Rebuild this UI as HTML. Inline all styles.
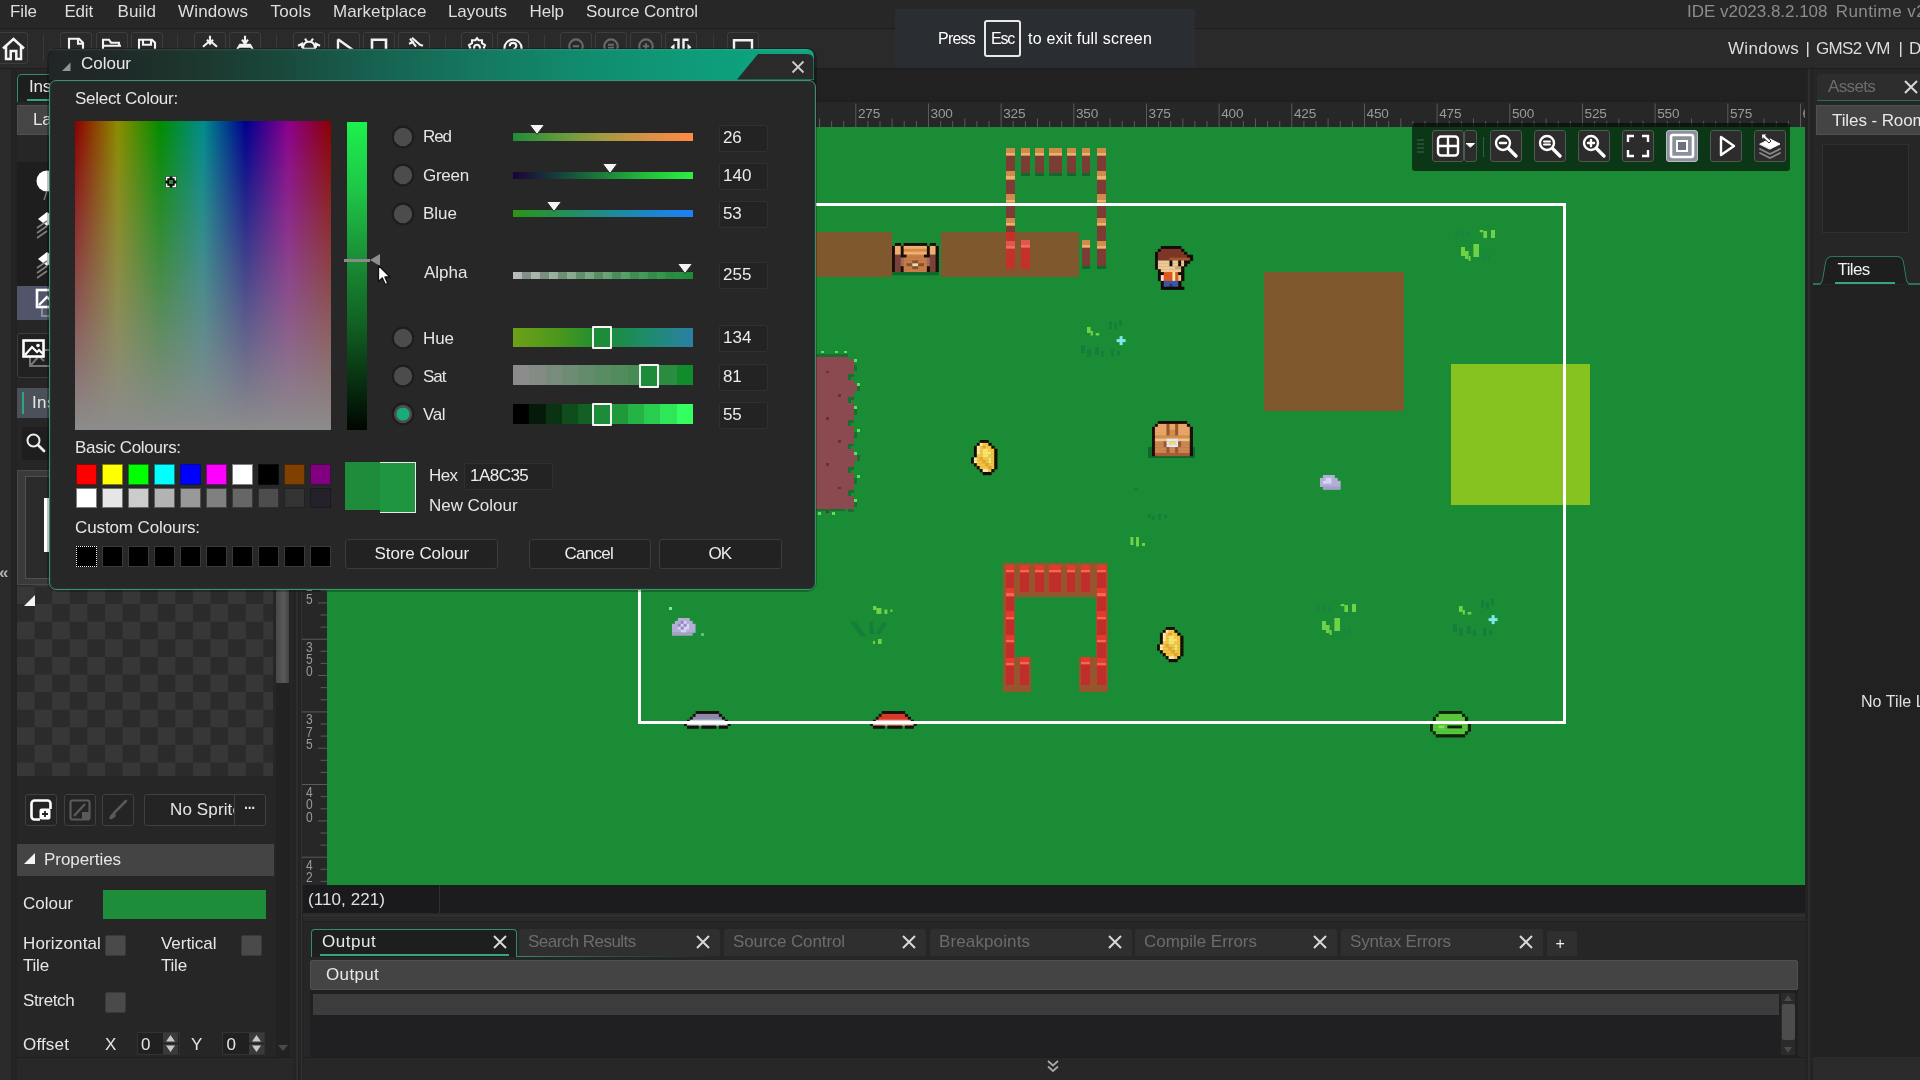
<!DOCTYPE html>
<html lang="en"><head><meta charset="utf-8"><title>Colour</title>
<style>
html,body{margin:0;padding:0;background:#262626;}
body{width:1920px;height:1080px;overflow:hidden;position:relative;font-family:"Liberation Sans",sans-serif;}
#root{position:absolute;left:0;top:0;width:1920px;height:1080px;overflow:hidden;background:#262626;will-change:transform;}
#root div,#root svg,#root span.t{position:absolute;box-sizing:border-box;}
span.t{white-space:pre;line-height:1;}
svg{overflow:visible;display:block;}
.clip{overflow:hidden;}
</style></head>
<body><div id="root">
<div style="left:0px;top:0px;width:1920px;height:28px;background:#272727;"></div>
<div style="left:0px;top:28px;width:1920px;height:1px;background:#1c1c1c;"></div>
<div style="left:0px;top:29px;width:1920px;height:39px;background:#2a2a2a;"></div>
<div style="left:0px;top:68px;width:1920px;height:1px;background:#1d1d1d;"></div>
<div style="left:0px;top:69px;width:1920px;height:1011px;background:#242424;"></div>
<span id="t1" class="t" style="left:10px;top:2.6px;font-size:17px;color:#dedede;letter-spacing:-0.12px;">File</span>
<span id="t2" class="t" style="left:64.5px;top:2.6px;font-size:17px;color:#dedede;letter-spacing:-0.23px;">Edit</span>
<span id="t3" class="t" style="left:117.5px;top:2.6px;font-size:17px;color:#dedede;letter-spacing:0.15px;">Build</span>
<span id="t4" class="t" style="left:178px;top:2.6px;font-size:17px;color:#dedede;letter-spacing:0.16px;">Windows</span>
<span id="t5" class="t" style="left:270.5px;top:2.6px;font-size:17px;color:#dedede;letter-spacing:0.18px;">Tools</span>
<span id="t6" class="t" style="left:333px;top:2.6px;font-size:17px;color:#dedede;letter-spacing:0.08px;">Marketplace</span>
<span id="t7" class="t" style="left:448px;top:2.6px;font-size:17px;color:#dedede;letter-spacing:-0.08px;">Layouts</span>
<span id="t8" class="t" style="left:529.5px;top:2.6px;font-size:17px;color:#dedede;letter-spacing:-0.13px;">Help</span>
<span id="t9" class="t" style="left:586px;top:2.6px;font-size:17px;color:#dedede;letter-spacing:-0.10px;">Source Control</span>
<span id="t10" class="t" style="left:1687px;top:2.6px;font-size:17px;color:#8c8c8c;letter-spacing:-0.02px;">IDE v2023.8.2.108</span>
<span id="t11" class="t" style="left:1835.7px;top:2.6px;font-size:17px;color:#8c8c8c;letter-spacing:0.44px;">Runtime v2023.8.2</span>
<span id="t12" class="t" style="left:1728px;top:39.6px;font-size:17px;color:#dcdcdc;letter-spacing:0.31px;">Windows</span>
<span id="t13" class="t" style="left:1805.5px;top:39.6px;font-size:17px;color:#dcdcdc;">|</span>
<span id="t14" class="t" style="left:1816px;top:39.6px;font-size:17px;color:#dcdcdc;letter-spacing:-0.68px;">GMS2 VM</span>
<span id="t15" class="t" style="left:1898.5px;top:39.6px;font-size:17px;color:#dcdcdc;">|</span>
<span id="t16" class="t" style="left:1909px;top:39.6px;font-size:17px;color:#dcdcdc;letter-spacing:0.94px;">Default</span>
<div style="left:-3px;top:32px;width:31px;height:32px;background:#2a2a2a;border:1px solid #3d3d3d;border-radius:3px;"></div>
<svg style="left:0px;top:32px;" width="28" height="32" viewBox="0 0 28 32"><path d="M3 16.5 L13.5 7 L24 16.5 M6 14 V27 H10.7 V19 H16.3 V27 H21 V14" fill="none" stroke="#f4f4f4" stroke-width="2.5" stroke-linejoin="miter"/></svg>
<div style="left:43px;top:35px;width:1px;height:26px;background:#3a3a3a;"></div>
<div style="left:60px;top:32px;width:32px;height:32px;background:#2a2a2a;border:1px solid #3d3d3d;border-radius:3px;"></div>
<svg style="left:60px;top:32px;" width="32" height="32" viewBox="0 0 32 32"><g fill="none" stroke="#f2f2f2" stroke-width="2.1" transform="translate(0,-2.3)"><path d="M9 24 V9 H19 L23 13 V24 M18 9 V14 H23"/></g></svg>
<div style="left:96px;top:32px;width:32px;height:32px;background:#2a2a2a;border:1px solid #3d3d3d;border-radius:3px;"></div>
<svg style="left:96px;top:32px;" width="32" height="32" viewBox="0 0 32 32"><g fill="none" stroke="#f2f2f2" stroke-width="2.1" transform="translate(0,-2.3)"><path d="M7 24 V10 H13 L15 13 H23 V16 M7 16 H25"/></g></svg>
<div style="left:131px;top:32px;width:32px;height:32px;background:#2a2a2a;border:1px solid #3d3d3d;border-radius:3px;"></div>
<svg style="left:131px;top:32px;" width="32" height="32" viewBox="0 0 32 32"><g fill="none" stroke="#f2f2f2" stroke-width="2.1" transform="translate(0,-2.3)"><path d="M8 24 V10 H21 L24 13 V24 M12 10 V15 H20 V10"/></g></svg>
<div style="left:177px;top:35px;width:1px;height:26px;background:#3a3a3a;"></div>
<div style="left:194px;top:32px;width:32px;height:32px;background:#2a2a2a;border:1px solid #3d3d3d;border-radius:3px;"></div>
<svg style="left:194px;top:32px;" width="32" height="32" viewBox="0 0 32 32"><g fill="none" stroke="#f2f2f2" stroke-width="2.1" transform="translate(0,-2.3)"><path d="M16 6 V13 M13 10 L16 14 L19 10 M9 17 L16 11 M23 17 L16 11" /></g></svg>
<div style="left:229px;top:32px;width:32px;height:32px;background:#2a2a2a;border:1px solid #3d3d3d;border-radius:3px;"></div>
<svg style="left:229px;top:32px;" width="32" height="32" viewBox="0 0 32 32"><g fill="none" stroke="#f2f2f2" stroke-width="2.1" transform="translate(0,-2.3)"><path d="M16 6 V13 M13 10 L16 14 L19 10 M10 17 H22 M8 20 L11 15 H21 L24 20"/></g></svg>
<div style="left:276px;top:35px;width:1px;height:26px;background:#3a3a3a;"></div>
<div style="left:293px;top:32px;width:32px;height:32px;background:#2a2a2a;border:1px solid #3d3d3d;border-radius:3px;"></div>
<svg style="left:293px;top:32px;" width="32" height="32" viewBox="0 0 32 32"><g fill="none" stroke="#f2f2f2" stroke-width="2.1" transform="translate(0,-2.3)"><path d="M10 19 Q10 12 16 12 Q22 12 22 19 Z M12 9 L14 12 M20 9 L18 12 M5 16 L9 14 L9 18 M27 16 L23 14 L23 18" /></g></svg>
<div style="left:328px;top:32px;width:32px;height:32px;background:#2a2a2a;border:1px solid #3d3d3d;border-radius:3px;"></div>
<svg style="left:328px;top:32px;" width="32" height="32" viewBox="0 0 32 32"><g fill="none" stroke="#f2f2f2" stroke-width="2.1" transform="translate(0,-2.3)"><path d="M10 9.5 L26 21 M10 9.5 V26" stroke-width="2.4"/></g></svg>
<div style="left:363px;top:32px;width:32px;height:32px;background:#2a2a2a;border:1px solid #3d3d3d;border-radius:3px;"></div>
<svg style="left:363px;top:32px;" width="32" height="32" viewBox="0 0 32 32"><g fill="none" stroke="#f2f2f2" stroke-width="2.1" transform="translate(0,-2.3)"><path d="M9 26 V10 H23 V26" stroke-width="2.6"/></g></svg>
<div style="left:398px;top:32px;width:32px;height:32px;background:#2a2a2a;border:1px solid #3d3d3d;border-radius:3px;"></div>
<svg style="left:398px;top:32px;" width="32" height="32" viewBox="0 0 32 32"><g fill="none" stroke="#f2f2f2" stroke-width="2.1" transform="translate(0,-2.3)"><path d="M12 9 L18 17 M14 8 L22 15 L25 16 M11 14 L16 12"/></g></svg>
<div style="left:445px;top:35px;width:1px;height:26px;background:#3a3a3a;"></div>
<div style="left:461px;top:32px;width:32px;height:32px;background:#2a2a2a;border:1px solid #3d3d3d;border-radius:3px;"></div>
<svg style="left:461px;top:32px;" width="32" height="32" viewBox="0 0 32 32"><g fill="none" stroke="#f2f2f2" stroke-width="2.1" transform="translate(0,-2.3)"><path d="M9.5 19 L8 15.5 L11 13.5 L11 10.5 L14.5 10.5 L16 8.5 L17.5 10.5 L21 10.5 L21 13.5 L24 15.5 L22.5 19"/><path d="M13 19 Q13 15 16 15 Q19 15 19 19"/></g></svg>
<div style="left:497px;top:32px;width:32px;height:32px;background:#2a2a2a;border:1px solid #3d3d3d;border-radius:3px;"></div>
<svg style="left:497px;top:32px;" width="32" height="32" viewBox="0 0 32 32"><g fill="none" stroke="#f2f2f2" stroke-width="2.1" transform="translate(0,-2.3)"><circle cx="16" cy="18.5" r="8.6"/><path d="M12.7 16.5 Q12.7 13.2 16 13.2 Q19.3 13.2 19.3 16.2 Q19.3 18 16.5 19.5"/></g></svg>
<div style="left:544px;top:35px;width:1px;height:26px;background:#3a3a3a;"></div>
<div style="left:560px;top:32px;width:32px;height:32px;background:#2a2a2a;border:1px solid #3d3d3d;border-radius:3px;"></div>
<svg style="left:560px;top:32px;" width="32" height="32" viewBox="0 0 32 32"><g fill="none" stroke="#6a6a6a" stroke-width="2.1" transform="translate(0,-2.3)"><circle cx="16" cy="16.5" r="6.8"/><path d="M13 16.5 H19"/></g></svg>
<div style="left:595px;top:32px;width:32px;height:32px;background:#2a2a2a;border:1px solid #3d3d3d;border-radius:3px;"></div>
<svg style="left:595px;top:32px;" width="32" height="32" viewBox="0 0 32 32"><g fill="none" stroke="#6a6a6a" stroke-width="2.1" transform="translate(0,-2.3)"><circle cx="16" cy="16.5" r="6.8"/><path d="M13 15 H19 M13 18 H19"/></g></svg>
<div style="left:630px;top:32px;width:32px;height:32px;background:#2a2a2a;border:1px solid #3d3d3d;border-radius:3px;"></div>
<svg style="left:630px;top:32px;" width="32" height="32" viewBox="0 0 32 32"><g fill="none" stroke="#6a6a6a" stroke-width="2.1" transform="translate(0,-2.3)"><circle cx="16" cy="16.5" r="6.8"/><path d="M13 16.5 H19 M16 13.5 V19.5"/></g></svg>
<div style="left:665px;top:32px;width:32px;height:32px;background:#2a2a2a;border:1px solid #3d3d3d;border-radius:3px;"></div>
<svg style="left:665px;top:32px;" width="32" height="32" viewBox="0 0 32 32"><g fill="none" stroke="#f2f2f2" stroke-width="2.1" transform="translate(0,-2.3)"><path d="M13.5 26 V10 H8.5 M18.5 26 V10 H23.5" stroke-width="2.4"/><path d="M9.5 14 V21 L5.5 17.5 Z M22.5 14 V21 L26.5 17.5 Z" fill="#f2f2f2" stroke="none"/></g></svg>
<div style="left:713px;top:35px;width:1px;height:26px;background:#3a3a3a;"></div>
<div style="left:727px;top:32px;width:32px;height:32px;background:#2a2a2a;border:1px solid #3d3d3d;border-radius:3px;"></div>
<svg style="left:727px;top:32px;" width="32" height="32" viewBox="0 0 32 32"><g fill="none" stroke="#f2f2f2" stroke-width="2.1" transform="translate(0,-2.3)"><path d="M7 26 V10.5 H25 V26" stroke-width="2.4"/></g></svg>
<div style="left:895px;top:9px;width:300px;height:59px;background:#2a2d31;border-radius:2px;"></div>
<span id="t17" class="t" style="left:938px;top:30.5px;font-size:16px;color:#ffffff;letter-spacing:-0.76px;">Press</span>
<div style="left:984px;top:20px;width:37px;height:37px;border:2px solid #e8e8e8;border-radius:3px;"></div>
<span id="t18" class="t" style="left:991px;top:30.5px;font-size:16px;color:#ffffff;letter-spacing:-1.27px;">Esc</span>
<span id="t19" class="t" style="left:1028px;top:30.5px;font-size:16px;color:#ffffff;letter-spacing:0.21px;">to exit full screen</span>
<div style="left:0px;top:69px;width:17px;height:1011px;background:#2a2a2a;"></div>
<div style="left:10.5px;top:69px;width:6.5px;height:1011px;background:#232323;"></div>
<div style="left:17px;top:69px;width:276px;height:988px;background:#262626;"></div>
<div style="left:293px;top:69px;width:12px;height:1011px;background:#242424;"></div>
<div style="left:296px;top:69px;width:2px;height:1011px;background:#2d2d2d;"></div>
<div style="left:301px;top:69px;width:1px;height:1011px;background:#323232;"></div>
<div style="left:17px;top:74px;width:40px;height:28px;background:#1e1e1e;border:1.5px solid #2f8f6a;border-bottom:none;border-radius:5px 5px 0 0;"></div>
<div style="left:27px;top:99px;width:30px;height:2px;background:#35a77a;"></div>
<span id="t20" class="t" style="left:29px;top:77.6px;font-size:17px;color:#e6e6e6;letter-spacing:-0.23px;">Inspector</span>
<div style="left:17px;top:105px;width:260px;height:30px;background:#454545;border:1px solid #505050;"></div>
<span id="t21" class="t" style="left:33px;top:111.1px;font-size:17px;color:#e6e6e6;letter-spacing:-0.19px;">Layers</span>
<div style="left:17px;top:162px;width:260px;height:158px;background:#1e1e1e;"></div>
<svg style="left:17px;top:162px;" width="40" height="160" viewBox="0 0 40 160"><circle cx="30" cy="19" r="10.5" fill="#fff"/><path d="M30 29 L27 38" stroke="#777" stroke-width="1.5"/><path d="M21 57 L30 50 L39 57 L30 64 Z" fill="#fff"/><path d="M20 66 L30 59 M20 71 L30 64 M20 76 L30 69" stroke="#808080" stroke-width="1.6" fill="none"/><path d="M21 97 L30 90 L39 97 L30 104 Z" fill="#fff"/><path d="M20 106 L30 99 M20 111 L30 104 M20 116 L30 109" stroke="#808080" stroke-width="1.6" fill="none"/></svg>
<div style="left:17px;top:286px;width:260px;height:34px;background:#50556a;"></div>
<svg style="left:17px;top:286px;" width="40" height="34" viewBox="0 0 40 34"><rect x="25" y="14" width="20" height="16" fill="none" stroke="#8a8f9a" stroke-width="2"/><rect x="20" y="4" width="22" height="17" fill="#50556a" stroke="#fff" stroke-width="2.6"/><path d="M22 19 L30 11 L38 19" fill="none" stroke="#fff" stroke-width="2.4"/></svg>
<div style="left:17px;top:333px;width:44px;height:45px;background:#212121;border:1px solid #3c3c3c;border-radius:3px;"></div>
<svg style="left:17px;top:333px;" width="44" height="45" viewBox="0 0 44 45"><rect x="13" y="17" width="20" height="16" fill="none" stroke="#777" stroke-width="2"/><path d="M14 32 L22 23 L27 28" fill="none" stroke="#777" stroke-width="2"/><rect x="6.5" y="7.5" width="20" height="16" fill="#212121" stroke="#fff" stroke-width="2.6"/><path d="M8 22 L15 14 L20 19 L22 17 L26 21" fill="none" stroke="#fff" stroke-width="2.2"/><circle cx="21" cy="12.5" r="1.8" fill="#fff"/></svg>
<div style="left:17px;top:388px;width:260px;height:30px;background:#4a5159;"></div>
<div style="left:22px;top:392px;width:2px;height:22px;background:#2fa57c;"></div>
<span id="t22" class="t" style="left:32px;top:394.1px;font-size:17px;color:#e6e6e6;letter-spacing:0.38px;">Instance Layer Properties</span>
<div style="left:22px;top:427px;width:40px;height:33px;background:#1e1e1e;"></div>
<svg style="left:22px;top:427px;" width="40" height="33" viewBox="0 0 40 33"><circle cx="11.5" cy="13.5" r="6" fill="none" stroke="#eee" stroke-width="2"/><path d="M16 18 L22 24" stroke="#eee" stroke-width="2.8" stroke-linecap="round"/></svg>
<div style="left:17px;top:470px;width:260px;height:115px;background:#3a3a3a;border:1px solid #4a4a4a;"></div>
<div style="left:25px;top:476px;width:244px;height:103px;background:#2a2a2a;border:1px solid #505050;"></div>
<div style="left:44px;top:498px;width:10px;height:54px;background:#ffffff;"></div>
<span id="t23" class="t" style="left:-1px;top:563.6px;font-size:17px;color:#b4b4b4;font-weight:bold;">«</span>
<div style="left:17px;top:585px;width:256px;height:191px;background:#2b2b2b;background-image:conic-gradient(#2b2b2b 25%,#373737 0 50%,#2b2b2b 0 75%,#373737 0);background-size:35.2px 35.2px;background-position:0px 1.5px;"></div>
<svg style="left:24px;top:595px;" width="12" height="12" viewBox="0 0 12 12"><path d="M0 11 L11 11 L11 0 Z" fill="#f4f4f4"/></svg>
<div style="left:276px;top:585px;width:14px;height:472px;background:#222222;"></div>
<div style="left:276px;top:585px;width:13px;height:98px;background:linear-gradient(90deg,#474747,#5a5a5a 60%,#444);"></div>
<svg style="left:276px;top:1043px;" width="14" height="10" viewBox="0 0 14 10"><path d="M2 2 L12 2 L7 8 Z" fill="#4a4a4a"/></svg>
<div style="left:25px;top:794px;width:32px;height:32px;background:#242424;border:1px solid #404040;border-radius:3px;"></div>
<svg style="left:25px;top:794px;" width="32" height="32" viewBox="0 0 32 32"><rect x="6.5" y="6.5" width="19" height="19" rx="3" fill="none" stroke="#fff" stroke-width="2.6"/><rect x="15" y="15" width="12" height="12" fill="#242424"/><rect x="14.5" y="14.5" width="11" height="11" rx="2" fill="#fff"/><path d="M17 20 H23 M20 17 V23" stroke="#242424" stroke-width="1.8"/></svg>
<div style="left:63.5px;top:794px;width:32px;height:32px;background:#242424;border:1px solid #404040;border-radius:3px;"></div>
<svg style="left:63.5px;top:794px;" width="32" height="32" viewBox="0 0 32 32"><rect x="6.5" y="6.5" width="19" height="19" rx="2" fill="none" stroke="#5a5a5a" stroke-width="2.2"/><path d="M10 22 L21 10" stroke="#5a5a5a" stroke-width="2.4"/><rect x="18" y="18" width="7" height="7" fill="#5a5a5a"/></svg>
<div style="left:102px;top:794px;width:32px;height:32px;background:#242424;border:1px solid #404040;border-radius:3px;"></div>
<svg style="left:102px;top:794px;" width="32" height="32" viewBox="0 0 32 32"><path d="M9 24 L12 19 L24 7" stroke="#5a5a5a" stroke-width="2.6" fill="none" stroke-linecap="round"/><path d="M7 25 Q8 20 12 19 L14 21 Q13 25 7 25Z" fill="#5a5a5a"/></svg>
<div style="left:143.5px;top:794px;width:122px;height:32px;background:#242424;border:1px solid #404040;border-radius:3px;"></div>
<div style="left:233.5px;top:795px;width:1px;height:30px;background:#404040;"></div>
<div style="left:144.5px;top:795px;width:89px;height:30px;overflow:hidden;"><span id="t24" class="t" style="left:25.5px;top:6.1px;font-size:17px;color:#e6e6e6;letter-spacing:0.13px;">No Sprite</span></div>
<span id="t25" class="t" style="left:244px;top:801.1px;font-size:14px;color:#e6e6e6;letter-spacing:-1.00px;font-weight:bold;">···</span>
<div style="left:17px;top:844px;width:257px;height:32px;background:#444444;"></div>
<svg style="left:24px;top:853px;" width="12" height="12" viewBox="0 0 12 12"><path d="M0 11 L11 11 L11 0 Z" fill="#f4f4f4"/></svg>
<span id="t26" class="t" style="left:44px;top:850.6px;font-size:17px;color:#e6e6e6;letter-spacing:-0.05px;">Properties</span>
<span id="t27" class="t" style="left:23px;top:894.6px;font-size:17px;color:#e6e6e6;letter-spacing:-0.02px;">Colour</span>
<div style="left:103px;top:889.5px;width:163px;height:29px;background:#1d8d39;"></div>
<span id="t28" class="t" style="left:23px;top:935.1px;font-size:17px;color:#e6e6e6;letter-spacing:0.15px;">Horizontal</span>
<span id="t29" class="t" style="left:23px;top:956.6px;font-size:17px;color:#e6e6e6;letter-spacing:-0.22px;">Tile</span>
<div style="left:105px;top:935px;width:21px;height:21px;background:#4a4a4a;border:1px solid #3a3a3a;border-radius:2px;"></div>
<span id="t30" class="t" style="left:161px;top:935.1px;font-size:17px;color:#e6e6e6;letter-spacing:-0.03px;">Vertical</span>
<span id="t31" class="t" style="left:161px;top:956.6px;font-size:17px;color:#e6e6e6;letter-spacing:-0.22px;">Tile</span>
<div style="left:241px;top:935px;width:21px;height:21px;background:#4a4a4a;border:1px solid #3a3a3a;border-radius:2px;"></div>
<span id="t32" class="t" style="left:23px;top:992.1px;font-size:17px;color:#e6e6e6;letter-spacing:-0.36px;">Stretch</span>
<div style="left:105px;top:992px;width:21px;height:21px;background:#4a4a4a;border:1px solid #3a3a3a;border-radius:2px;"></div>
<span id="t33" class="t" style="left:23px;top:1035.6px;font-size:17px;color:#e6e6e6;letter-spacing:0.17px;">Offset</span>
<span id="t34" class="t" style="left:105px;top:1035.6px;font-size:17px;color:#e6e6e6;letter-spacing:-1.34px;">X</span>
<div style="left:136.5px;top:1031.5px;width:43px;height:23px;background:#202020;border:1px solid #333;"></div>
<span id="t35" class="t" style="left:141.0px;top:1035.6px;font-size:17px;color:#e6e6e6;letter-spacing:-0.47px;">0</span>
<div style="left:163.0px;top:1032.5px;width:15px;height:21px;background:#3a3a3a;"></div>
<svg style="left:163.0px;top:1032.5px;" width="15" height="21" viewBox="0 0 15 21"><path d="M3 8.5 L12 8.5 L7.5 2 Z M3 12.5 L12 12.5 L7.5 19 Z" fill="#c8c8c8"/><path d="M0 10.5 H15" stroke="#222" stroke-width="1.5"/></svg>
<span id="t36" class="t" style="left:191px;top:1035.6px;font-size:17px;color:#e6e6e6;letter-spacing:-1.84px;">Y</span>
<div style="left:222px;top:1031.5px;width:43px;height:23px;background:#202020;border:1px solid #333;"></div>
<span id="t37" class="t" style="left:226.5px;top:1035.6px;font-size:17px;color:#e6e6e6;letter-spacing:-0.47px;">0</span>
<div style="left:248.5px;top:1032.5px;width:15px;height:21px;background:#3a3a3a;"></div>
<svg style="left:248.5px;top:1032.5px;" width="15" height="21" viewBox="0 0 15 21"><path d="M3 8.5 L12 8.5 L7.5 2 Z M3 12.5 L12 12.5 L7.5 19 Z" fill="#c8c8c8"/><path d="M0 10.5 H15" stroke="#222" stroke-width="1.5"/></svg>
<div style="left:17px;top:1057px;width:276px;height:1px;background:#1e1e1e;"></div>
<div style="left:17px;top:1058px;width:276px;height:22px;background:#282828;"></div>
<div style="left:303px;top:69px;width:1502px;height:31px;background:#212121;"></div>
<div style="left:303px;top:100px;width:1502px;height:27px;background:#272727;"></div>
<div style="left:302px;top:100px;width:25px;height:785px;background:#272727;"></div>
<div style="left:327px;top:127px;width:1478px;height:758px;background:#1a8c35;"></div>
<svg style="left:305px;top:100px;" width="1500" height="27" viewBox="0 0 1500 27"><rect x="29.5" y="21" width="1" height="6" fill="#5a5a5a"/><rect x="41.6" y="3.5" width="1" height="23.5" fill="#5a5a5a"/><rect x="53.7" y="21" width="1" height="6" fill="#5a5a5a"/><rect x="65.8" y="21" width="1" height="6" fill="#5a5a5a"/><rect x="78.0" y="18.5" width="1" height="8.5" fill="#5a5a5a"/><rect x="90.1" y="21" width="1" height="6" fill="#5a5a5a"/><rect x="102.2" y="21" width="1" height="6" fill="#5a5a5a"/><rect x="114.3" y="3.5" width="1" height="23.5" fill="#5a5a5a"/><rect x="126.4" y="21" width="1" height="6" fill="#5a5a5a"/><rect x="138.5" y="21" width="1" height="6" fill="#5a5a5a"/><rect x="150.6" y="18.5" width="1" height="8.5" fill="#5a5a5a"/><rect x="162.7" y="21" width="1" height="6" fill="#5a5a5a"/><rect x="174.9" y="21" width="1" height="6" fill="#5a5a5a"/><rect x="187.0" y="3.5" width="1" height="23.5" fill="#5a5a5a"/><rect x="199.1" y="21" width="1" height="6" fill="#5a5a5a"/><rect x="211.2" y="21" width="1" height="6" fill="#5a5a5a"/><rect x="223.3" y="18.5" width="1" height="8.5" fill="#5a5a5a"/><rect x="235.4" y="21" width="1" height="6" fill="#5a5a5a"/><rect x="247.5" y="21" width="1" height="6" fill="#5a5a5a"/><rect x="259.6" y="3.5" width="1" height="23.5" fill="#5a5a5a"/><rect x="271.7" y="21" width="1" height="6" fill="#5a5a5a"/><rect x="283.9" y="21" width="1" height="6" fill="#5a5a5a"/><rect x="296.0" y="18.5" width="1" height="8.5" fill="#5a5a5a"/><rect x="308.1" y="21" width="1" height="6" fill="#5a5a5a"/><rect x="320.2" y="21" width="1" height="6" fill="#5a5a5a"/><rect x="332.3" y="3.5" width="1" height="23.5" fill="#5a5a5a"/><rect x="344.4" y="21" width="1" height="6" fill="#5a5a5a"/><rect x="356.5" y="21" width="1" height="6" fill="#5a5a5a"/><rect x="368.6" y="18.5" width="1" height="8.5" fill="#5a5a5a"/><rect x="380.7" y="21" width="1" height="6" fill="#5a5a5a"/><rect x="392.9" y="21" width="1" height="6" fill="#5a5a5a"/><rect x="405.0" y="3.5" width="1" height="23.5" fill="#5a5a5a"/><rect x="417.1" y="21" width="1" height="6" fill="#5a5a5a"/><rect x="429.2" y="21" width="1" height="6" fill="#5a5a5a"/><rect x="441.3" y="18.5" width="1" height="8.5" fill="#5a5a5a"/><rect x="453.4" y="21" width="1" height="6" fill="#5a5a5a"/><rect x="465.5" y="21" width="1" height="6" fill="#5a5a5a"/><rect x="477.6" y="3.5" width="1" height="23.5" fill="#5a5a5a"/><rect x="489.7" y="21" width="1" height="6" fill="#5a5a5a"/><rect x="501.9" y="21" width="1" height="6" fill="#5a5a5a"/><rect x="514.0" y="18.5" width="1" height="8.5" fill="#5a5a5a"/><rect x="526.1" y="21" width="1" height="6" fill="#5a5a5a"/><rect x="538.2" y="21" width="1" height="6" fill="#5a5a5a"/><rect x="550.3" y="3.5" width="1" height="23.5" fill="#5a5a5a"/><rect x="562.4" y="21" width="1" height="6" fill="#5a5a5a"/><rect x="574.5" y="21" width="1" height="6" fill="#5a5a5a"/><rect x="586.6" y="18.5" width="1" height="8.5" fill="#5a5a5a"/><rect x="598.7" y="21" width="1" height="6" fill="#5a5a5a"/><rect x="610.9" y="21" width="1" height="6" fill="#5a5a5a"/><rect x="623.0" y="3.5" width="1" height="23.5" fill="#5a5a5a"/><rect x="635.1" y="21" width="1" height="6" fill="#5a5a5a"/><rect x="647.2" y="21" width="1" height="6" fill="#5a5a5a"/><rect x="659.3" y="18.5" width="1" height="8.5" fill="#5a5a5a"/><rect x="671.4" y="21" width="1" height="6" fill="#5a5a5a"/><rect x="683.5" y="21" width="1" height="6" fill="#5a5a5a"/><rect x="695.6" y="3.5" width="1" height="23.5" fill="#5a5a5a"/><rect x="707.7" y="21" width="1" height="6" fill="#5a5a5a"/><rect x="719.9" y="21" width="1" height="6" fill="#5a5a5a"/><rect x="732.0" y="18.5" width="1" height="8.5" fill="#5a5a5a"/><rect x="744.1" y="21" width="1" height="6" fill="#5a5a5a"/><rect x="756.2" y="21" width="1" height="6" fill="#5a5a5a"/><rect x="768.3" y="3.5" width="1" height="23.5" fill="#5a5a5a"/><rect x="780.4" y="21" width="1" height="6" fill="#5a5a5a"/><rect x="792.5" y="21" width="1" height="6" fill="#5a5a5a"/><rect x="804.6" y="18.5" width="1" height="8.5" fill="#5a5a5a"/><rect x="816.7" y="21" width="1" height="6" fill="#5a5a5a"/><rect x="828.9" y="21" width="1" height="6" fill="#5a5a5a"/><rect x="841.0" y="3.5" width="1" height="23.5" fill="#5a5a5a"/><rect x="853.1" y="21" width="1" height="6" fill="#5a5a5a"/><rect x="865.2" y="21" width="1" height="6" fill="#5a5a5a"/><rect x="877.3" y="18.5" width="1" height="8.5" fill="#5a5a5a"/><rect x="889.4" y="21" width="1" height="6" fill="#5a5a5a"/><rect x="901.5" y="21" width="1" height="6" fill="#5a5a5a"/><rect x="913.6" y="3.5" width="1" height="23.5" fill="#5a5a5a"/><rect x="925.7" y="21" width="1" height="6" fill="#5a5a5a"/><rect x="937.9" y="21" width="1" height="6" fill="#5a5a5a"/><rect x="950.0" y="18.5" width="1" height="8.5" fill="#5a5a5a"/><rect x="962.1" y="21" width="1" height="6" fill="#5a5a5a"/><rect x="974.2" y="21" width="1" height="6" fill="#5a5a5a"/><rect x="986.3" y="3.5" width="1" height="23.5" fill="#5a5a5a"/><rect x="998.4" y="21" width="1" height="6" fill="#5a5a5a"/><rect x="1010.5" y="21" width="1" height="6" fill="#5a5a5a"/><rect x="1022.6" y="18.5" width="1" height="8.5" fill="#5a5a5a"/><rect x="1034.8" y="21" width="1" height="6" fill="#5a5a5a"/><rect x="1046.9" y="21" width="1" height="6" fill="#5a5a5a"/><rect x="1059.0" y="3.5" width="1" height="23.5" fill="#5a5a5a"/><rect x="1071.1" y="21" width="1" height="6" fill="#5a5a5a"/><rect x="1083.2" y="21" width="1" height="6" fill="#5a5a5a"/><rect x="1095.3" y="18.5" width="1" height="8.5" fill="#5a5a5a"/><rect x="1107.4" y="21" width="1" height="6" fill="#5a5a5a"/><rect x="1119.5" y="21" width="1" height="6" fill="#5a5a5a"/><rect x="1131.6" y="3.5" width="1" height="23.5" fill="#5a5a5a"/><rect x="1143.8" y="21" width="1" height="6" fill="#5a5a5a"/><rect x="1155.9" y="21" width="1" height="6" fill="#5a5a5a"/><rect x="1168.0" y="18.5" width="1" height="8.5" fill="#5a5a5a"/><rect x="1180.1" y="21" width="1" height="6" fill="#5a5a5a"/><rect x="1192.2" y="21" width="1" height="6" fill="#5a5a5a"/><rect x="1204.3" y="3.5" width="1" height="23.5" fill="#5a5a5a"/><rect x="1216.4" y="21" width="1" height="6" fill="#5a5a5a"/><rect x="1228.5" y="21" width="1" height="6" fill="#5a5a5a"/><rect x="1240.6" y="18.5" width="1" height="8.5" fill="#5a5a5a"/><rect x="1252.8" y="21" width="1" height="6" fill="#5a5a5a"/><rect x="1264.9" y="21" width="1" height="6" fill="#5a5a5a"/><rect x="1277.0" y="3.5" width="1" height="23.5" fill="#5a5a5a"/><rect x="1289.1" y="21" width="1" height="6" fill="#5a5a5a"/><rect x="1301.2" y="21" width="1" height="6" fill="#5a5a5a"/><rect x="1313.3" y="18.5" width="1" height="8.5" fill="#5a5a5a"/><rect x="1325.4" y="21" width="1" height="6" fill="#5a5a5a"/><rect x="1337.5" y="21" width="1" height="6" fill="#5a5a5a"/><rect x="1349.6" y="3.5" width="1" height="23.5" fill="#5a5a5a"/><rect x="1361.8" y="21" width="1" height="6" fill="#5a5a5a"/><rect x="1373.9" y="21" width="1" height="6" fill="#5a5a5a"/><rect x="1386.0" y="18.5" width="1" height="8.5" fill="#5a5a5a"/><rect x="1398.1" y="21" width="1" height="6" fill="#5a5a5a"/><rect x="1410.2" y="21" width="1" height="6" fill="#5a5a5a"/><rect x="1422.3" y="3.5" width="1" height="23.5" fill="#5a5a5a"/><rect x="1434.4" y="21" width="1" height="6" fill="#5a5a5a"/><rect x="1446.5" y="21" width="1" height="6" fill="#5a5a5a"/><rect x="1458.6" y="18.5" width="1" height="8.5" fill="#5a5a5a"/><rect x="1470.8" y="21" width="1" height="6" fill="#5a5a5a"/><rect x="1482.9" y="21" width="1" height="6" fill="#5a5a5a"/><rect x="1495.0" y="3.5" width="1" height="23.5" fill="#5a5a5a"/></svg>
<div style="left:303px;top:100px;width:1502px;height:2px;background:#1f1f1f;"></div>
<span id="t38" class="t" style="left:857.9px;top:106.5px;font-size:13.6px;color:#9a9a9a;letter-spacing:-0.19px;overflow:hidden;max-width:947px;">275</span>
<span id="t39" class="t" style="left:930.5675px;top:106.5px;font-size:13.6px;color:#9a9a9a;letter-spacing:-0.19px;overflow:hidden;max-width:874px;">300</span>
<span id="t40" class="t" style="left:1003.235px;top:106.5px;font-size:13.6px;color:#9a9a9a;letter-spacing:-0.20px;overflow:hidden;max-width:801px;">325</span>
<span id="t41" class="t" style="left:1075.9025px;top:106.5px;font-size:13.6px;color:#9a9a9a;letter-spacing:-0.19px;overflow:hidden;max-width:729px;">350</span>
<span id="t42" class="t" style="left:1148.5699999999997px;top:106.5px;font-size:13.6px;color:#9a9a9a;letter-spacing:-0.19px;overflow:hidden;max-width:656px;">375</span>
<span id="t43" class="t" style="left:1221.2374999999997px;top:106.5px;font-size:13.6px;color:#9a9a9a;letter-spacing:-0.19px;overflow:hidden;max-width:583px;">400</span>
<span id="t44" class="t" style="left:1293.9049999999997px;top:106.5px;font-size:13.6px;color:#9a9a9a;letter-spacing:-0.19px;overflow:hidden;max-width:511px;">425</span>
<span id="t45" class="t" style="left:1366.5724999999998px;top:106.5px;font-size:13.6px;color:#9a9a9a;letter-spacing:-0.19px;overflow:hidden;max-width:438px;">450</span>
<span id="t46" class="t" style="left:1439.2399999999998px;top:106.5px;font-size:13.6px;color:#9a9a9a;letter-spacing:-0.19px;overflow:hidden;max-width:365px;">475</span>
<span id="t47" class="t" style="left:1511.9074999999998px;top:106.5px;font-size:13.6px;color:#9a9a9a;letter-spacing:-0.19px;overflow:hidden;max-width:293px;">500</span>
<span id="t48" class="t" style="left:1584.5749999999998px;top:106.5px;font-size:13.6px;color:#9a9a9a;letter-spacing:-0.19px;overflow:hidden;max-width:220px;">525</span>
<span id="t49" class="t" style="left:1657.2424999999998px;top:106.5px;font-size:13.6px;color:#9a9a9a;letter-spacing:-0.19px;overflow:hidden;max-width:147px;">550</span>
<span id="t50" class="t" style="left:1729.9099999999999px;top:106.5px;font-size:13.6px;color:#9a9a9a;letter-spacing:-0.19px;overflow:hidden;max-width:75px;">575</span>
<span id="t51" class="t" style="left:1802.5774999999999px;top:106.5px;font-size:13.6px;color:#9a9a9a;letter-spacing:0.17px;overflow:hidden;max-width:2px;">600</span>
<svg style="left:302px;top:100px;" width="25" height="785" viewBox="0 0 25 785"><rect x="0" y="30.0" width="25" height="1" fill="#5a5a5a"/><rect x="18.5" y="42.1" width="6.5" height="1" fill="#5a5a5a"/><rect x="18.5" y="54.3" width="6.5" height="1" fill="#5a5a5a"/><rect x="16" y="66.4" width="9" height="1" fill="#5a5a5a"/><rect x="18.5" y="78.5" width="6.5" height="1" fill="#5a5a5a"/><rect x="18.5" y="90.6" width="6.5" height="1" fill="#5a5a5a"/><rect x="0" y="102.7" width="25" height="1" fill="#5a5a5a"/><rect x="18.5" y="114.8" width="6.5" height="1" fill="#5a5a5a"/><rect x="18.5" y="126.9" width="6.5" height="1" fill="#5a5a5a"/><rect x="16" y="139.0" width="9" height="1" fill="#5a5a5a"/><rect x="18.5" y="151.1" width="6.5" height="1" fill="#5a5a5a"/><rect x="18.5" y="163.3" width="6.5" height="1" fill="#5a5a5a"/><rect x="0" y="175.4" width="25" height="1" fill="#5a5a5a"/><rect x="18.5" y="187.5" width="6.5" height="1" fill="#5a5a5a"/><rect x="18.5" y="199.6" width="6.5" height="1" fill="#5a5a5a"/><rect x="16" y="211.7" width="9" height="1" fill="#5a5a5a"/><rect x="18.5" y="223.8" width="6.5" height="1" fill="#5a5a5a"/><rect x="18.5" y="235.9" width="6.5" height="1" fill="#5a5a5a"/><rect x="0" y="248.0" width="25" height="1" fill="#5a5a5a"/><rect x="18.5" y="260.1" width="6.5" height="1" fill="#5a5a5a"/><rect x="18.5" y="272.3" width="6.5" height="1" fill="#5a5a5a"/><rect x="16" y="284.4" width="9" height="1" fill="#5a5a5a"/><rect x="18.5" y="296.5" width="6.5" height="1" fill="#5a5a5a"/><rect x="18.5" y="308.6" width="6.5" height="1" fill="#5a5a5a"/><rect x="0" y="320.7" width="25" height="1" fill="#5a5a5a"/><rect x="18.5" y="332.8" width="6.5" height="1" fill="#5a5a5a"/><rect x="18.5" y="344.9" width="6.5" height="1" fill="#5a5a5a"/><rect x="16" y="357.0" width="9" height="1" fill="#5a5a5a"/><rect x="18.5" y="369.1" width="6.5" height="1" fill="#5a5a5a"/><rect x="18.5" y="381.3" width="6.5" height="1" fill="#5a5a5a"/><rect x="0" y="393.4" width="25" height="1" fill="#5a5a5a"/><rect x="18.5" y="405.5" width="6.5" height="1" fill="#5a5a5a"/><rect x="18.5" y="417.6" width="6.5" height="1" fill="#5a5a5a"/><rect x="16" y="429.7" width="9" height="1" fill="#5a5a5a"/><rect x="18.5" y="441.8" width="6.5" height="1" fill="#5a5a5a"/><rect x="18.5" y="453.9" width="6.5" height="1" fill="#5a5a5a"/><rect x="0" y="466.0" width="25" height="1" fill="#5a5a5a"/><rect x="18.5" y="478.1" width="6.5" height="1" fill="#5a5a5a"/><rect x="18.5" y="490.3" width="6.5" height="1" fill="#5a5a5a"/><rect x="16" y="502.4" width="9" height="1" fill="#5a5a5a"/><rect x="18.5" y="514.5" width="6.5" height="1" fill="#5a5a5a"/><rect x="18.5" y="526.6" width="6.5" height="1" fill="#5a5a5a"/><rect x="0" y="538.7" width="25" height="1" fill="#5a5a5a"/><rect x="18.5" y="550.8" width="6.5" height="1" fill="#5a5a5a"/><rect x="18.5" y="562.9" width="6.5" height="1" fill="#5a5a5a"/><rect x="16" y="575.0" width="9" height="1" fill="#5a5a5a"/><rect x="18.5" y="587.1" width="6.5" height="1" fill="#5a5a5a"/><rect x="18.5" y="599.3" width="6.5" height="1" fill="#5a5a5a"/><rect x="0" y="611.4" width="25" height="1" fill="#5a5a5a"/><rect x="18.5" y="623.5" width="6.5" height="1" fill="#5a5a5a"/><rect x="18.5" y="635.6" width="6.5" height="1" fill="#5a5a5a"/><rect x="16" y="647.7" width="9" height="1" fill="#5a5a5a"/><rect x="18.5" y="659.8" width="6.5" height="1" fill="#5a5a5a"/><rect x="18.5" y="671.9" width="6.5" height="1" fill="#5a5a5a"/><rect x="0" y="684.0" width="25" height="1" fill="#5a5a5a"/><rect x="18.5" y="696.1" width="6.5" height="1" fill="#5a5a5a"/><rect x="18.5" y="708.3" width="6.5" height="1" fill="#5a5a5a"/><rect x="16" y="720.4" width="9" height="1" fill="#5a5a5a"/><rect x="18.5" y="732.5" width="6.5" height="1" fill="#5a5a5a"/><rect x="18.5" y="744.6" width="6.5" height="1" fill="#5a5a5a"/><rect x="0" y="756.7" width="25" height="1" fill="#5a5a5a"/><rect x="18.5" y="768.8" width="6.5" height="1" fill="#5a5a5a"/><rect x="18.5" y="780.9" width="6.5" height="1" fill="#5a5a5a"/></svg>
<div class="clip" style="left:302px;top:100px;width:25px;height:785px;"><span id="t52" class="t" style="left:3.6px;top:467.1px;font-size:14px;color:#9a9a9a;transform:scaleX(0.86);transform-origin:0 0;">3</span><span id="t53" class="t" style="left:3.6px;top:479.4px;font-size:14px;color:#9a9a9a;transform:scaleX(0.86);transform-origin:0 0;">2</span><span id="t54" class="t" style="left:3.6px;top:491.7px;font-size:14px;color:#9a9a9a;transform:scaleX(0.86);transform-origin:0 0;">5</span><span id="t55" class="t" style="left:3.6px;top:539.7px;font-size:14px;color:#9a9a9a;transform:scaleX(0.86);transform-origin:0 0;">3</span><span id="t56" class="t" style="left:3.6px;top:552.0px;font-size:14px;color:#9a9a9a;transform:scaleX(0.86);transform-origin:0 0;">5</span><span id="t57" class="t" style="left:3.6px;top:564.3px;font-size:14px;color:#9a9a9a;transform:scaleX(0.86);transform-origin:0 0;">0</span><span id="t58" class="t" style="left:3.6px;top:612.4px;font-size:14px;color:#9a9a9a;transform:scaleX(0.86);transform-origin:0 0;">3</span><span id="t59" class="t" style="left:3.6px;top:624.7px;font-size:14px;color:#9a9a9a;transform:scaleX(0.86);transform-origin:0 0;">7</span><span id="t60" class="t" style="left:3.6px;top:637.0px;font-size:14px;color:#9a9a9a;transform:scaleX(0.86);transform-origin:0 0;">5</span><span id="t61" class="t" style="left:3.6px;top:685.1px;font-size:14px;color:#9a9a9a;transform:scaleX(0.86);transform-origin:0 0;">4</span><span id="t62" class="t" style="left:3.6px;top:697.4px;font-size:14px;color:#9a9a9a;transform:scaleX(0.86);transform-origin:0 0;">0</span><span id="t63" class="t" style="left:3.6px;top:709.7px;font-size:14px;color:#9a9a9a;transform:scaleX(0.86);transform-origin:0 0;">0</span><span id="t64" class="t" style="left:3.6px;top:757.8px;font-size:14px;color:#9a9a9a;transform:scaleX(0.86);transform-origin:0 0;">4</span><span id="t65" class="t" style="left:3.6px;top:770.1px;font-size:14px;color:#9a9a9a;transform:scaleX(0.86);transform-origin:0 0;">2</span></div>
<div style="left:303px;top:885px;width:1502px;height:28px;background:#1c1c1e;"></div>
<div style="left:303px;top:885px;width:137px;height:28px;background:#1a1a1c;border-right:1px solid #303030;"></div>
<span id="t66" class="t" style="left:308px;top:890.6px;font-size:17px;color:#e0e0e0;letter-spacing:0.08px;">(110, 221)</span>
<div style="left:303px;top:913px;width:1502px;height:8px;background:#2a2a2a;"></div>
<div style="left:303px;top:914.5px;width:1502px;height:1px;background:#343434;"></div>
<div style="left:1805px;top:69px;width:8px;height:1011px;background:#232323;"></div>
<div style="left:1808px;top:69px;width:2px;height:1011px;background:#2d2d2d;"></div>
<div style="left:303px;top:921px;width:1502px;height:136px;background:#262626;"></div>
<div style="left:303px;top:921px;width:1502px;height:1px;background:#1f1f1f;"></div>
<div style="left:311px;top:929px;width:206px;height:28px;background:#1e1e1e;border:1.5px solid #2f8f6a;border-bottom:none;border-radius:4px 4px 0 0;"></div>
<div style="left:320px;top:954px;width:189px;height:2px;background:#35a77a;"></div>
<span id="t67" class="t" style="left:322px;top:932.6px;font-size:17px;color:#e8e8e8;letter-spacing:0.54px;">Output</span>
<svg style="left:493px;top:934.5px;" width="14" height="14" viewBox="0 0 14 14"><path d="M1 1 L13 13 M13 1 L1 13" stroke="#d8d8d8" stroke-width="2" fill="none"/></svg>
<div style="left:519px;top:929px;width:201px;height:27px;background:#2f2f2f;border-radius:3px 3px 0 0;"></div>
<span id="t68" class="t" style="left:528px;top:932.6px;font-size:17px;color:#6c6c6c;letter-spacing:-0.54px;">Search Results</span>
<svg style="left:696px;top:934.5px;" width="14" height="14" viewBox="0 0 14 14"><path d="M1 1 L13 13 M13 1 L1 13" stroke="#d8d8d8" stroke-width="2" fill="none"/></svg>
<div style="left:724px;top:929px;width:202px;height:27px;background:#2f2f2f;border-radius:3px 3px 0 0;"></div>
<span id="t69" class="t" style="left:733px;top:932.6px;font-size:17px;color:#6c6c6c;letter-spacing:-0.10px;">Source Control</span>
<svg style="left:902px;top:934.5px;" width="14" height="14" viewBox="0 0 14 14"><path d="M1 1 L13 13 M13 1 L1 13" stroke="#d8d8d8" stroke-width="2" fill="none"/></svg>
<div style="left:930px;top:929px;width:202px;height:27px;background:#2f2f2f;border-radius:3px 3px 0 0;"></div>
<span id="t70" class="t" style="left:939px;top:932.6px;font-size:17px;color:#6c6c6c;letter-spacing:0.12px;">Breakpoints</span>
<svg style="left:1108px;top:934.5px;" width="14" height="14" viewBox="0 0 14 14"><path d="M1 1 L13 13 M13 1 L1 13" stroke="#d8d8d8" stroke-width="2" fill="none"/></svg>
<div style="left:1135px;top:929px;width:202px;height:27px;background:#2f2f2f;border-radius:3px 3px 0 0;"></div>
<span id="t71" class="t" style="left:1144px;top:932.6px;font-size:17px;color:#6c6c6c;letter-spacing:-0.03px;">Compile Errors</span>
<svg style="left:1313px;top:934.5px;" width="14" height="14" viewBox="0 0 14 14"><path d="M1 1 L13 13 M13 1 L1 13" stroke="#d8d8d8" stroke-width="2" fill="none"/></svg>
<div style="left:1341px;top:929px;width:202px;height:27px;background:#2f2f2f;border-radius:3px 3px 0 0;"></div>
<span id="t72" class="t" style="left:1350px;top:932.6px;font-size:17px;color:#6c6c6c;letter-spacing:-0.16px;">Syntax Errors</span>
<svg style="left:1519px;top:934.5px;" width="14" height="14" viewBox="0 0 14 14"><path d="M1 1 L13 13 M13 1 L1 13" stroke="#d8d8d8" stroke-width="2" fill="none"/></svg>
<div style="left:1547px;top:931px;width:30px;height:25px;background:#2f2f2f;border-radius:3px 3px 0 0;"></div>
<span id="t73" class="t" style="left:1555.5px;top:935.5px;font-size:16px;color:#f0f0f0;">+</span>
<div style="left:517px;top:955.5px;width:200px;height:1.5px;background:linear-gradient(90deg,#2f8f6a,rgba(47,143,106,0.5) 40%,rgba(47,143,106,0));"></div>
<div style="left:310px;top:960px;width:1488px;height:30px;background:#444444;border:1px solid #505050;border-radius:2px;"></div>
<span id="t74" class="t" style="left:326px;top:965.6px;font-size:17px;color:#e8e8e8;letter-spacing:0.36px;">Output</span>
<div style="left:310px;top:990px;width:1488px;height:67px;background:#202022;"></div>
<div style="left:313px;top:993.5px;width:1466px;height:21px;background:#3c3c3c;"></div>
<div style="left:1781px;top:993px;width:14px;height:62px;background:#2a2a2a;"></div>
<div style="left:1781.5px;top:1003.5px;width:13px;height:36px;background:#4c4c4c;border-radius:2px;"></div>
<svg style="left:1781px;top:993px;" width="14" height="62" viewBox="0 0 14 62"><path d="M3 8 L11 8 L7 2 Z M3 54 L11 54 L7 60 Z" fill="#4a4a4a"/></svg>
<div style="left:303px;top:1057px;width:1502px;height:23px;background:#272727;"></div>
<div style="left:303px;top:1057px;width:1502px;height:1px;background:#1e1e1e;"></div>
<svg style="left:1046px;top:1060px;" width="14" height="13" viewBox="0 0 14 13"><path d="M2 1 L7 5.5 L12 1 M2 6.5 L7 11 L12 6.5" stroke="#a8a8a8" stroke-width="1.8" fill="none"/></svg>
<div style="left:1813px;top:69px;width:107px;height:988px;background:#262626;"></div>
<div style="left:1813px;top:1057px;width:107px;height:23px;background:#2a2a2a;"></div>
<div style="left:1817px;top:74px;width:110px;height:26px;background:#2d2d2d;border-radius:3px 3px 0 0;"></div>
<span id="t75" class="t" style="left:1828px;top:78.1px;font-size:17px;color:#6c6c6c;letter-spacing:-0.64px;">Assets</span>
<svg style="left:1904px;top:80px;" width="14" height="14" viewBox="0 0 14 14"><path d="M1 1 L13 13 M13 1 L1 13" stroke="#d8d8d8" stroke-width="2" fill="none"/></svg>
<div style="left:1817px;top:100px;width:103px;height:1px;background:#2a6d55;"></div>
<div style="left:1816px;top:104.5px;width:110px;height:30px;background:#444444;border:1px solid #505050;"></div>
<span id="t76" class="t" style="left:1832px;top:111.6px;font-size:17px;color:#e8e8e8;letter-spacing:-0.09px;">Tiles - Room1</span>
<div style="left:1822px;top:144px;width:87px;height:89px;background:#222222;border:1px solid #303030;"></div>
<svg style="left:1813px;top:255px;" width="107" height="31" viewBox="0 0 107 31"><path d="M0 29 H6 Q9 29 10 25 L13 7 Q14 2 19 2 H84 Q89 2 90 7 L93 25 Q94 29 97 29 H107" fill="none" stroke="#2f8f6a" stroke-width="1.6"/><path d="M6 29 Q9 29 10 25 L13 7 Q14 2 19 2 H84 Q89 2 90 7 L93 25 Q94 29 97 29 Z" fill="#1e1e1e"/></svg>
<div style="left:1835px;top:282px;width:60px;height:2px;background:#35a77a;"></div>
<span id="t77" class="t" style="left:1837.5px;top:261.1px;font-size:17px;color:#f0f0f0;letter-spacing:-0.61px;">Tiles</span>
<div style="left:1813px;top:285px;width:107px;height:772px;background:#212121;"></div>
<span id="t78" class="t" style="left:1861px;top:693.5px;font-size:16px;color:#e0e0e0;letter-spacing:0.06px;">No Tile Layer</span>
<svg style="left:0;top:0;" width="1920" height="1080" shape-rendering="crispEdges"><rect x="700.0" y="231.5" width="191.5" height="45.5" fill="#80582e"/><rect x="941.0" y="231.5" width="138.2" height="45.5" fill="#80582e"/><rect x="1264.3" y="272.3" width="139.5" height="139.0" fill="#80582e"/><rect x="1450.5" y="364.3" width="139.5" height="140.7" fill="#86c220"/><rect x="700.0" y="356.5" width="148.0" height="152.0" fill="#8b4a4f"/><rect x="848.0" y="359.4" width="5.8" height="14.5" fill="#8b4a4f"/><rect x="853.8" y="365.2" width="2.9" height="5.8" fill="#1b6e30"/><rect x="850.9" y="373.9" width="2.9" height="2.9" fill="#1b6e30"/><rect x="848.0" y="373.9" width="2.9" height="5.8" fill="#1b6e30"/><rect x="853.8" y="359.4" width="2.9" height="2.9" fill="#5fe05a"/><rect x="826.0" y="370.5" width="2.9" height="2.9" fill="#6a2f38"/><rect x="848.0" y="379.7" width="5.8" height="17.4" fill="#8b4a4f"/><rect x="853.8" y="382.6" width="2.9" height="8.7" fill="#8b4a4f"/><rect x="856.7" y="385.5" width="2.9" height="5.8" fill="#1b6e30"/><rect x="850.9" y="397.1" width="2.9" height="2.9" fill="#1b6e30"/><rect x="848.0" y="397.1" width="2.9" height="5.8" fill="#1b6e30"/><rect x="856.7" y="382.6" width="2.9" height="2.9" fill="#5fe05a"/><rect x="838.0" y="393.7" width="2.9" height="2.9" fill="#6a2f38"/><rect x="848.0" y="402.9" width="5.8" height="17.4" fill="#8b4a4f"/><rect x="853.8" y="408.7" width="2.9" height="5.8" fill="#1b6e30"/><rect x="850.9" y="420.3" width="2.9" height="2.9" fill="#1b6e30"/><rect x="848.0" y="420.3" width="2.9" height="5.8" fill="#1b6e30"/><rect x="853.8" y="405.8" width="2.9" height="2.9" fill="#5fe05a"/><rect x="826.0" y="416.9" width="2.9" height="2.9" fill="#6a2f38"/><rect x="848.0" y="426.1" width="5.8" height="17.4" fill="#8b4a4f"/><rect x="853.8" y="431.9" width="2.9" height="5.8" fill="#1b6e30"/><rect x="850.9" y="443.5" width="2.9" height="2.9" fill="#1b6e30"/><rect x="848.0" y="443.5" width="2.9" height="5.8" fill="#1b6e30"/><rect x="856.7" y="429.0" width="2.9" height="2.9" fill="#5fe05a"/><rect x="838.0" y="440.1" width="2.9" height="2.9" fill="#6a2f38"/><rect x="848.0" y="449.3" width="5.8" height="17.4" fill="#8b4a4f"/><rect x="853.8" y="452.2" width="2.9" height="8.7" fill="#8b4a4f"/><rect x="856.7" y="455.1" width="2.9" height="5.8" fill="#1b6e30"/><rect x="850.9" y="466.7" width="2.9" height="2.9" fill="#1b6e30"/><rect x="848.0" y="466.7" width="2.9" height="5.8" fill="#1b6e30"/><rect x="853.8" y="452.2" width="2.9" height="2.9" fill="#5fe05a"/><rect x="826.0" y="463.3" width="2.9" height="2.9" fill="#6a2f38"/><rect x="848.0" y="472.5" width="5.8" height="17.4" fill="#8b4a4f"/><rect x="853.8" y="478.3" width="2.9" height="5.8" fill="#1b6e30"/><rect x="850.9" y="489.9" width="2.9" height="2.9" fill="#1b6e30"/><rect x="848.0" y="489.9" width="2.9" height="5.8" fill="#1b6e30"/><rect x="856.7" y="475.4" width="2.9" height="2.9" fill="#5fe05a"/><rect x="838.0" y="486.5" width="2.9" height="2.9" fill="#6a2f38"/><rect x="848.0" y="495.7" width="5.8" height="13.0" fill="#8b4a4f"/><rect x="853.8" y="501.5" width="2.9" height="5.8" fill="#1b6e30"/><rect x="850.9" y="508.7" width="2.9" height="2.9" fill="#1b6e30"/><rect x="848.0" y="508.7" width="2.9" height="2.9" fill="#1b6e30"/><rect x="853.8" y="498.6" width="2.9" height="2.9" fill="#5fe05a"/><rect x="826.0" y="509.7" width="2.9" height="2.9" fill="#6a2f38"/><rect x="815.0" y="353.6" width="33.0" height="2.9" fill="#1b6e30"/><rect x="815.0" y="508.5" width="30.0" height="2.9" fill="#1b6e30"/><rect x="821.0" y="350.5" width="2.9" height="2.9" fill="#5fe05a"/><rect x="835.0" y="350.5" width="2.9" height="2.9" fill="#5fe05a"/><rect x="844.0" y="350.5" width="2.9" height="2.9" fill="#5fe05a"/><rect x="818.0" y="512.0" width="2.9" height="2.9" fill="#5fe05a"/><rect x="832.0" y="512.0" width="2.9" height="2.9" fill="#5fe05a"/><rect x="1006.3" y="147.8" width="8.6" height="23.3" fill="#7b3c36"/><rect x="1006.3" y="147.8" width="8.6" height="8.4" fill="#d08a4a"/><rect x="1006.3" y="153.0" width="8.6" height="2.2" fill="#ecb070"/><rect x="1006.3" y="171.1" width="8.6" height="23.3" fill="#7b3c36"/><rect x="1006.3" y="171.1" width="8.6" height="8.4" fill="#d08a4a"/><rect x="1006.3" y="176.3" width="8.6" height="2.2" fill="#ecb070"/><rect x="1006.3" y="194.4" width="8.6" height="23.3" fill="#7b3c36"/><rect x="1006.3" y="194.4" width="8.6" height="8.4" fill="#d08a4a"/><rect x="1006.3" y="199.6" width="8.6" height="2.2" fill="#ecb070"/><rect x="1006.3" y="217.7" width="8.6" height="23.3" fill="#7b3c36"/><rect x="1006.3" y="217.7" width="8.6" height="8.4" fill="#d08a4a"/><rect x="1006.3" y="222.9" width="8.6" height="2.2" fill="#ecb070"/><rect x="1006.3" y="241.0" width="8.6" height="27.0" fill="#7b3c36"/><rect x="1006.3" y="241.0" width="8.6" height="8.4" fill="#d08a4a"/><rect x="1006.3" y="246.2" width="8.6" height="2.2" fill="#ecb070"/><rect x="1006.3" y="265.5" width="8.6" height="3.0" fill="#0f6a2a"/><rect x="1020.8" y="147.8" width="8.7" height="27.5" fill="#7b3c36"/><rect x="1020.8" y="147.8" width="8.7" height="8.4" fill="#d08a4a"/><rect x="1020.8" y="153.0" width="8.7" height="2.2" fill="#ecb070"/><rect x="1020.8" y="172.8" width="8.7" height="3.0" fill="#0f6a2a"/><rect x="1035.3" y="147.8" width="8.7" height="27.5" fill="#7b3c36"/><rect x="1035.3" y="147.8" width="8.7" height="8.4" fill="#d08a4a"/><rect x="1035.3" y="153.0" width="8.7" height="2.2" fill="#ecb070"/><rect x="1035.3" y="172.8" width="8.7" height="3.0" fill="#0f6a2a"/><rect x="1049.3" y="147.8" width="12.3" height="27.5" fill="#7b3c36"/><rect x="1049.3" y="147.8" width="12.3" height="8.4" fill="#d08a4a"/><rect x="1049.3" y="153.0" width="12.3" height="2.2" fill="#ecb070"/><rect x="1049.3" y="172.8" width="12.3" height="3.0" fill="#0f6a2a"/><rect x="1067.1" y="147.8" width="8.7" height="27.5" fill="#7b3c36"/><rect x="1067.1" y="147.8" width="8.7" height="8.4" fill="#d08a4a"/><rect x="1067.1" y="153.0" width="8.7" height="2.2" fill="#ecb070"/><rect x="1067.1" y="172.8" width="8.7" height="3.0" fill="#0f6a2a"/><rect x="1081.5" y="147.8" width="8.7" height="27.5" fill="#7b3c36"/><rect x="1081.5" y="147.8" width="8.7" height="8.4" fill="#d08a4a"/><rect x="1081.5" y="153.0" width="8.7" height="2.2" fill="#ecb070"/><rect x="1081.5" y="172.8" width="8.7" height="3.0" fill="#0f6a2a"/><rect x="1097.1" y="147.8" width="8.9" height="23.3" fill="#7b3c36"/><rect x="1097.1" y="147.8" width="8.9" height="8.4" fill="#d08a4a"/><rect x="1097.1" y="153.0" width="8.9" height="2.2" fill="#ecb070"/><rect x="1097.1" y="171.1" width="8.9" height="23.3" fill="#7b3c36"/><rect x="1097.1" y="171.1" width="8.9" height="8.4" fill="#d08a4a"/><rect x="1097.1" y="176.3" width="8.9" height="2.2" fill="#ecb070"/><rect x="1097.1" y="194.4" width="8.9" height="23.3" fill="#7b3c36"/><rect x="1097.1" y="194.4" width="8.9" height="8.4" fill="#d08a4a"/><rect x="1097.1" y="199.6" width="8.9" height="2.2" fill="#ecb070"/><rect x="1097.1" y="217.7" width="8.9" height="23.3" fill="#7b3c36"/><rect x="1097.1" y="217.7" width="8.9" height="8.4" fill="#d08a4a"/><rect x="1097.1" y="222.9" width="8.9" height="2.2" fill="#ecb070"/><rect x="1097.1" y="241.0" width="8.9" height="27.0" fill="#7b3c36"/><rect x="1097.1" y="241.0" width="8.9" height="8.4" fill="#d08a4a"/><rect x="1097.1" y="246.2" width="8.9" height="2.2" fill="#ecb070"/><rect x="1097.1" y="265.5" width="8.9" height="3.0" fill="#0f6a2a"/><rect x="1020.8" y="240.0" width="8.7" height="28.2" fill="#7b3c36"/><rect x="1020.8" y="240.0" width="8.7" height="8.4" fill="#d08a4a"/><rect x="1020.8" y="245.2" width="8.7" height="2.2" fill="#ecb070"/><rect x="1020.8" y="265.5" width="8.7" height="3.0" fill="#0f6a2a"/><rect x="1081.5" y="240.0" width="8.7" height="28.2" fill="#7b3c36"/><rect x="1081.5" y="240.0" width="8.7" height="8.4" fill="#d08a4a"/><rect x="1081.5" y="245.2" width="8.7" height="2.2" fill="#ecb070"/><rect x="1081.5" y="265.5" width="8.7" height="3.0" fill="#0f6a2a"/><rect x="1006.3" y="232.0" width="8.6" height="36.5" fill="#c5302b"/><rect x="1006.3" y="241.0" width="8.6" height="8.4" fill="#e0584a"/><rect x="1006.3" y="246.2" width="8.6" height="2.2" fill="#ee7060"/><rect x="1020.8" y="240.0" width="8.7" height="28.5" fill="#c5302b"/><rect x="1020.8" y="240.0" width="8.7" height="8.4" fill="#e0584a"/><rect x="1020.8" y="245.2" width="8.7" height="2.2" fill="#ee7060"/><rect x="1003.4" y="563.0" width="104.4" height="34.0" fill="#96552c"/><rect x="1003.4" y="596.8" width="12.0" height="62.0" fill="#96552c"/><rect x="1096.0" y="596.8" width="11.8" height="62.0" fill="#96552c"/><rect x="1003.4" y="656.8" width="27.6" height="35.5" fill="#96552c"/><rect x="1079.4" y="656.8" width="28.4" height="35.5" fill="#96552c"/><rect x="1005.8" y="564.8" width="8.6" height="23.3" fill="#c02e2c"/><rect x="1005.8" y="564.8" width="8.6" height="8.4" fill="#e23a2c"/><rect x="1005.8" y="570.0" width="8.6" height="2.2" fill="#f06a52"/><rect x="1005.8" y="588.1" width="8.6" height="23.3" fill="#c02e2c"/><rect x="1005.8" y="588.1" width="8.6" height="8.4" fill="#e23a2c"/><rect x="1005.8" y="593.3" width="8.6" height="2.2" fill="#f06a52"/><rect x="1005.8" y="611.4" width="8.6" height="23.3" fill="#c02e2c"/><rect x="1005.8" y="611.4" width="8.6" height="8.4" fill="#e23a2c"/><rect x="1005.8" y="616.6" width="8.6" height="2.2" fill="#f06a52"/><rect x="1005.8" y="634.7" width="8.6" height="23.3" fill="#c02e2c"/><rect x="1005.8" y="634.7" width="8.6" height="8.4" fill="#e23a2c"/><rect x="1005.8" y="639.9" width="8.6" height="2.2" fill="#f06a52"/><rect x="1005.8" y="658.0" width="8.6" height="27.0" fill="#c02e2c"/><rect x="1005.8" y="658.0" width="8.6" height="8.4" fill="#e23a2c"/><rect x="1005.8" y="663.2" width="8.6" height="2.2" fill="#f06a52"/><rect x="1020.3" y="564.8" width="8.7" height="27.5" fill="#c02e2c"/><rect x="1020.3" y="564.8" width="8.7" height="8.4" fill="#e23a2c"/><rect x="1020.3" y="570.0" width="8.7" height="2.2" fill="#f06a52"/><rect x="1034.8" y="564.8" width="8.7" height="27.5" fill="#c02e2c"/><rect x="1034.8" y="564.8" width="8.7" height="8.4" fill="#e23a2c"/><rect x="1034.8" y="570.0" width="8.7" height="2.2" fill="#f06a52"/><rect x="1048.8" y="564.8" width="12.3" height="27.5" fill="#c02e2c"/><rect x="1048.8" y="564.8" width="12.3" height="8.4" fill="#e23a2c"/><rect x="1048.8" y="570.0" width="12.3" height="2.2" fill="#f06a52"/><rect x="1066.6" y="564.8" width="8.7" height="27.5" fill="#c02e2c"/><rect x="1066.6" y="564.8" width="8.7" height="8.4" fill="#e23a2c"/><rect x="1066.6" y="570.0" width="8.7" height="2.2" fill="#f06a52"/><rect x="1081.0" y="564.8" width="8.7" height="27.5" fill="#c02e2c"/><rect x="1081.0" y="564.8" width="8.7" height="8.4" fill="#e23a2c"/><rect x="1081.0" y="570.0" width="8.7" height="2.2" fill="#f06a52"/><rect x="1096.6" y="564.8" width="8.9" height="23.3" fill="#c02e2c"/><rect x="1096.6" y="564.8" width="8.9" height="8.4" fill="#e23a2c"/><rect x="1096.6" y="570.0" width="8.9" height="2.2" fill="#f06a52"/><rect x="1096.6" y="588.1" width="8.9" height="23.3" fill="#c02e2c"/><rect x="1096.6" y="588.1" width="8.9" height="8.4" fill="#e23a2c"/><rect x="1096.6" y="593.3" width="8.9" height="2.2" fill="#f06a52"/><rect x="1096.6" y="611.4" width="8.9" height="23.3" fill="#c02e2c"/><rect x="1096.6" y="611.4" width="8.9" height="8.4" fill="#e23a2c"/><rect x="1096.6" y="616.6" width="8.9" height="2.2" fill="#f06a52"/><rect x="1096.6" y="634.7" width="8.9" height="23.3" fill="#c02e2c"/><rect x="1096.6" y="634.7" width="8.9" height="8.4" fill="#e23a2c"/><rect x="1096.6" y="639.9" width="8.9" height="2.2" fill="#f06a52"/><rect x="1096.6" y="658.0" width="8.9" height="27.0" fill="#c02e2c"/><rect x="1096.6" y="658.0" width="8.9" height="8.4" fill="#e23a2c"/><rect x="1096.6" y="663.2" width="8.9" height="2.2" fill="#f06a52"/><rect x="1020.3" y="657.0" width="8.7" height="28.2" fill="#c02e2c"/><rect x="1020.3" y="657.0" width="8.7" height="8.4" fill="#e23a2c"/><rect x="1020.3" y="662.2" width="8.7" height="2.2" fill="#f06a52"/><rect x="1081.0" y="657.0" width="8.7" height="28.2" fill="#c02e2c"/><rect x="1081.0" y="657.0" width="8.7" height="8.4" fill="#e23a2c"/><rect x="1081.0" y="662.2" width="8.7" height="2.2" fill="#f06a52"/></svg>
<svg style="left:1154.5px;top:246.1px;" width="37.8" height="43.6"><rect x="5.81" y="0.00" width="20.65" height="3.21" fill="#160a08"/><rect x="2.91" y="2.91" width="3.21" height="3.21" fill="#160a08"/><rect x="5.81" y="2.91" width="20.65" height="3.21" fill="#7c3626"/><rect x="26.16" y="2.91" width="3.21" height="3.21" fill="#160a08"/><rect x="0.00" y="5.81" width="3.21" height="3.21" fill="#160a08"/><rect x="2.91" y="5.81" width="26.46" height="3.21" fill="#7c3626"/><rect x="29.07" y="5.81" width="3.21" height="3.21" fill="#160a08"/><rect x="0.00" y="8.72" width="3.21" height="3.21" fill="#160a08"/><rect x="2.91" y="8.72" width="29.37" height="3.21" fill="#7c3626"/><rect x="31.97" y="8.72" width="6.11" height="3.21" fill="#160a08"/><rect x="0.00" y="11.63" width="3.21" height="3.21" fill="#160a08"/><rect x="2.91" y="11.63" width="11.93" height="3.21" fill="#7c3626"/><rect x="14.53" y="11.63" width="20.65" height="3.21" fill="#a8522f"/><rect x="34.88" y="11.63" width="3.21" height="3.21" fill="#160a08"/><rect x="0.00" y="14.53" width="3.21" height="3.21" fill="#160a08"/><rect x="2.91" y="14.53" width="11.93" height="3.21" fill="#f2c696"/><rect x="14.53" y="14.53" width="3.21" height="3.21" fill="#160a08"/><rect x="17.44" y="14.53" width="6.11" height="3.21" fill="#f2c696"/><rect x="23.25" y="14.53" width="3.21" height="3.21" fill="#160a08"/><rect x="26.16" y="14.53" width="3.21" height="3.21" fill="#f2c696"/><rect x="29.07" y="14.53" width="6.11" height="3.21" fill="#160a08"/><rect x="0.00" y="17.44" width="3.21" height="3.21" fill="#160a08"/><rect x="2.91" y="17.44" width="11.93" height="3.21" fill="#f2c696"/><rect x="14.53" y="17.44" width="3.21" height="3.21" fill="#160a08"/><rect x="17.44" y="17.44" width="6.11" height="3.21" fill="#f2c696"/><rect x="23.25" y="17.44" width="3.21" height="3.21" fill="#160a08"/><rect x="26.16" y="17.44" width="3.21" height="3.21" fill="#f2c696"/><rect x="29.07" y="17.44" width="3.21" height="3.21" fill="#160a08"/><rect x="0.00" y="20.35" width="3.21" height="3.21" fill="#160a08"/><rect x="2.91" y="20.35" width="17.74" height="3.21" fill="#f2c696"/><rect x="20.35" y="20.35" width="6.11" height="3.21" fill="#dca274"/><rect x="26.16" y="20.35" width="3.21" height="3.21" fill="#160a08"/><rect x="2.91" y="23.25" width="3.21" height="3.21" fill="#160a08"/><rect x="5.81" y="23.25" width="20.65" height="3.21" fill="#f2c696"/><rect x="26.16" y="23.25" width="3.21" height="3.21" fill="#160a08"/><rect x="2.91" y="26.16" width="6.11" height="3.21" fill="#160a08"/><rect x="8.72" y="26.16" width="9.02" height="3.21" fill="#e2561e"/><rect x="17.44" y="26.16" width="3.21" height="3.21" fill="#fbe9a6"/><rect x="20.35" y="26.16" width="3.21" height="3.21" fill="#e2561e"/><rect x="23.25" y="26.16" width="6.11" height="3.21" fill="#160a08"/><rect x="2.91" y="29.07" width="3.21" height="3.21" fill="#160a08"/><rect x="5.81" y="29.07" width="3.21" height="3.21" fill="#f6ded0"/><rect x="8.72" y="29.07" width="9.02" height="3.21" fill="#e2561e"/><rect x="17.44" y="29.07" width="3.21" height="3.21" fill="#fbe9a6"/><rect x="20.35" y="29.07" width="3.21" height="3.21" fill="#e2561e"/><rect x="23.25" y="29.07" width="3.21" height="3.21" fill="#f2c696"/><rect x="26.16" y="29.07" width="3.21" height="3.21" fill="#160a08"/><rect x="2.91" y="31.97" width="3.21" height="3.21" fill="#160a08"/><rect x="5.81" y="31.97" width="3.21" height="3.21" fill="#f6ded0"/><rect x="8.72" y="31.97" width="9.02" height="3.21" fill="#e2561e"/><rect x="17.44" y="31.97" width="3.21" height="3.21" fill="#fbe9a6"/><rect x="20.35" y="31.97" width="3.21" height="3.21" fill="#e2561e"/><rect x="23.25" y="31.97" width="3.21" height="3.21" fill="#f2c696"/><rect x="26.16" y="31.97" width="3.21" height="3.21" fill="#160a08"/><rect x="5.81" y="34.88" width="3.21" height="3.21" fill="#160a08"/><rect x="8.72" y="34.88" width="14.83" height="3.21" fill="#3d55a8"/><rect x="23.25" y="34.88" width="3.21" height="3.21" fill="#160a08"/><rect x="5.81" y="37.79" width="3.21" height="3.21" fill="#160a08"/><rect x="8.72" y="37.79" width="6.11" height="3.21" fill="#3d55a8"/><rect x="14.53" y="37.79" width="3.21" height="3.21" fill="#283272"/><rect x="17.44" y="37.79" width="6.11" height="3.21" fill="#3d55a8"/><rect x="23.25" y="37.79" width="3.21" height="3.21" fill="#160a08"/><rect x="5.81" y="40.69" width="23.55" height="3.21" fill="#160a08"/></svg>
<svg style="left:892.4px;top:243.1px;" width="46.5" height="32.0"><rect x="2.91" y="0.00" width="6.11" height="3.21" fill="#1a0c0a"/><rect x="11.63" y="0.00" width="23.55" height="3.21" fill="#1a0c0a"/><rect x="37.79" y="0.00" width="6.11" height="3.21" fill="#1a0c0a"/><rect x="0.00" y="2.91" width="3.21" height="3.21" fill="#1a0c0a"/><rect x="2.91" y="2.91" width="6.11" height="3.21" fill="#eeb070"/><rect x="8.72" y="2.91" width="3.21" height="3.21" fill="#1a0c0a"/><rect x="11.63" y="2.91" width="23.55" height="3.21" fill="#eeb070"/><rect x="34.88" y="2.91" width="3.21" height="3.21" fill="#1a0c0a"/><rect x="37.79" y="2.91" width="6.11" height="3.21" fill="#eeb070"/><rect x="43.60" y="2.91" width="3.21" height="3.21" fill="#1a0c0a"/><rect x="0.00" y="5.81" width="3.21" height="3.21" fill="#1a0c0a"/><rect x="2.91" y="5.81" width="6.11" height="3.21" fill="#eeb070"/><rect x="8.72" y="5.81" width="3.21" height="3.21" fill="#1a0c0a"/><rect x="11.63" y="5.81" width="23.55" height="3.21" fill="#d68a48"/><rect x="34.88" y="5.81" width="3.21" height="3.21" fill="#1a0c0a"/><rect x="37.79" y="5.81" width="6.11" height="3.21" fill="#eeb070"/><rect x="43.60" y="5.81" width="3.21" height="3.21" fill="#1a0c0a"/><rect x="0.00" y="8.72" width="3.21" height="3.21" fill="#1a0c0a"/><rect x="2.91" y="8.72" width="6.11" height="3.21" fill="#eeb070"/><rect x="8.72" y="8.72" width="3.21" height="3.21" fill="#1a0c0a"/><rect x="11.63" y="8.72" width="23.55" height="3.21" fill="#eeb070"/><rect x="34.88" y="8.72" width="3.21" height="3.21" fill="#1a0c0a"/><rect x="37.79" y="8.72" width="6.11" height="3.21" fill="#eeb070"/><rect x="43.60" y="8.72" width="3.21" height="3.21" fill="#1a0c0a"/><rect x="0.00" y="11.63" width="3.21" height="3.21" fill="#1a0c0a"/><rect x="2.91" y="11.63" width="6.11" height="3.21" fill="#7c4038"/><rect x="8.72" y="11.63" width="6.11" height="3.21" fill="#1a0c0a"/><rect x="14.53" y="11.63" width="17.74" height="3.21" fill="#c97c4a"/><rect x="31.97" y="11.63" width="6.11" height="3.21" fill="#1a0c0a"/><rect x="37.79" y="11.63" width="6.11" height="3.21" fill="#7c4038"/><rect x="43.60" y="11.63" width="3.21" height="3.21" fill="#1a0c0a"/><rect x="0.00" y="14.53" width="3.21" height="3.21" fill="#1a0c0a"/><rect x="2.91" y="14.53" width="6.11" height="3.21" fill="#7c4038"/><rect x="8.72" y="14.53" width="3.21" height="3.21" fill="#a8685a"/><rect x="11.63" y="14.53" width="23.55" height="3.21" fill="#c97c4a"/><rect x="34.88" y="14.53" width="3.21" height="3.21" fill="#a8685a"/><rect x="37.79" y="14.53" width="6.11" height="3.21" fill="#7c4038"/><rect x="43.60" y="14.53" width="3.21" height="3.21" fill="#1a0c0a"/><rect x="0.00" y="17.44" width="3.21" height="3.21" fill="#1a0c0a"/><rect x="2.91" y="17.44" width="6.11" height="3.21" fill="#7c4038"/><rect x="8.72" y="17.44" width="3.21" height="3.21" fill="#a8685a"/><rect x="11.63" y="17.44" width="9.02" height="3.21" fill="#c97c4a"/><rect x="20.35" y="17.44" width="6.11" height="3.21" fill="#8e4e2c"/><rect x="26.16" y="17.44" width="9.02" height="3.21" fill="#c97c4a"/><rect x="34.88" y="17.44" width="3.21" height="3.21" fill="#a8685a"/><rect x="37.79" y="17.44" width="6.11" height="3.21" fill="#7c4038"/><rect x="43.60" y="17.44" width="3.21" height="3.21" fill="#1a0c0a"/><rect x="0.00" y="20.35" width="3.21" height="3.21" fill="#1a0c0a"/><rect x="2.91" y="20.35" width="6.11" height="3.21" fill="#7c4038"/><rect x="8.72" y="20.35" width="3.21" height="3.21" fill="#a8685a"/><rect x="11.63" y="20.35" width="3.21" height="3.21" fill="#c97c4a"/><rect x="14.53" y="20.35" width="6.11" height="3.21" fill="#8e4e2c"/><rect x="20.35" y="20.35" width="6.11" height="3.21" fill="#f6d8a8"/><rect x="26.16" y="20.35" width="6.11" height="3.21" fill="#8e4e2c"/><rect x="31.97" y="20.35" width="3.21" height="3.21" fill="#c97c4a"/><rect x="34.88" y="20.35" width="3.21" height="3.21" fill="#a8685a"/><rect x="37.79" y="20.35" width="6.11" height="3.21" fill="#7c4038"/><rect x="43.60" y="20.35" width="3.21" height="3.21" fill="#1a0c0a"/><rect x="0.00" y="23.25" width="3.21" height="3.21" fill="#1a0c0a"/><rect x="2.91" y="23.25" width="6.11" height="3.21" fill="#7c4038"/><rect x="8.72" y="23.25" width="3.21" height="3.21" fill="#1a0c0a"/><rect x="11.63" y="23.25" width="9.02" height="3.21" fill="#c97c4a"/><rect x="20.35" y="23.25" width="6.11" height="3.21" fill="#8e4e2c"/><rect x="26.16" y="23.25" width="9.02" height="3.21" fill="#c97c4a"/><rect x="34.88" y="23.25" width="3.21" height="3.21" fill="#1a0c0a"/><rect x="37.79" y="23.25" width="6.11" height="3.21" fill="#7c4038"/><rect x="43.60" y="23.25" width="3.21" height="3.21" fill="#1a0c0a"/><rect x="0.00" y="26.16" width="3.21" height="3.21" fill="#1a0c0a"/><rect x="2.91" y="26.16" width="6.11" height="3.21" fill="#7c4038"/><rect x="8.72" y="26.16" width="3.21" height="3.21" fill="#1a0c0a"/><rect x="11.63" y="26.16" width="23.55" height="3.21" fill="#c97c4a"/><rect x="34.88" y="26.16" width="3.21" height="3.21" fill="#1a0c0a"/><rect x="37.79" y="26.16" width="6.11" height="3.21" fill="#7c4038"/><rect x="43.60" y="26.16" width="3.21" height="3.21" fill="#1a0c0a"/><rect x="0.00" y="29.07" width="46.81" height="3.21" fill="#0f6a2a"/></svg>
<div style="left:1148.4px;top:447.2px;width:46.4px;height:10.4px;background:#0f6a2a;"></div>
<svg style="left:1151.7px;top:421px;" width="40.7" height="34.9"><rect x="5.81" y="0.00" width="29.37" height="3.21" fill="#1a0c0a"/><rect x="2.91" y="2.91" width="3.21" height="3.21" fill="#1a0c0a"/><rect x="5.81" y="2.91" width="9.02" height="3.21" fill="#eaa566"/><rect x="14.53" y="2.91" width="3.21" height="3.21" fill="#9a5630"/><rect x="17.44" y="2.91" width="6.11" height="3.21" fill="#eaa566"/><rect x="23.25" y="2.91" width="3.21" height="3.21" fill="#9a5630"/><rect x="26.16" y="2.91" width="9.02" height="3.21" fill="#eaa566"/><rect x="34.88" y="2.91" width="3.21" height="3.21" fill="#1a0c0a"/><rect x="0.00" y="5.81" width="3.21" height="3.21" fill="#1a0c0a"/><rect x="2.91" y="5.81" width="11.93" height="3.21" fill="#eaa566"/><rect x="14.53" y="5.81" width="3.21" height="3.21" fill="#9a5630"/><rect x="17.44" y="5.81" width="6.11" height="3.21" fill="#eaa566"/><rect x="23.25" y="5.81" width="3.21" height="3.21" fill="#9a5630"/><rect x="26.16" y="5.81" width="11.93" height="3.21" fill="#eaa566"/><rect x="37.79" y="5.81" width="3.21" height="3.21" fill="#1a0c0a"/><rect x="0.00" y="8.72" width="3.21" height="3.21" fill="#1a0c0a"/><rect x="2.91" y="8.72" width="11.93" height="3.21" fill="#eaa566"/><rect x="14.53" y="8.72" width="3.21" height="3.21" fill="#9a5630"/><rect x="17.44" y="8.72" width="6.11" height="3.21" fill="#d88c4c"/><rect x="23.25" y="8.72" width="3.21" height="3.21" fill="#9a5630"/><rect x="26.16" y="8.72" width="11.93" height="3.21" fill="#eaa566"/><rect x="37.79" y="8.72" width="3.21" height="3.21" fill="#1a0c0a"/><rect x="0.00" y="11.63" width="3.21" height="3.21" fill="#1a0c0a"/><rect x="2.91" y="11.63" width="11.93" height="3.21" fill="#eaa566"/><rect x="14.53" y="11.63" width="3.21" height="3.21" fill="#9a5630"/><rect x="17.44" y="11.63" width="6.11" height="3.21" fill="#d88c4c"/><rect x="23.25" y="11.63" width="3.21" height="3.21" fill="#9a5630"/><rect x="26.16" y="11.63" width="11.93" height="3.21" fill="#eaa566"/><rect x="37.79" y="11.63" width="3.21" height="3.21" fill="#1a0c0a"/><rect x="0.00" y="14.53" width="3.21" height="3.21" fill="#1a0c0a"/><rect x="2.91" y="14.53" width="35.18" height="3.21" fill="#d88c4c"/><rect x="37.79" y="14.53" width="3.21" height="3.21" fill="#1a0c0a"/><rect x="0.00" y="17.44" width="3.21" height="3.21" fill="#1a0c0a"/><rect x="2.91" y="17.44" width="11.93" height="3.21" fill="#f4c090"/><rect x="14.53" y="17.44" width="11.93" height="3.21" fill="#efe2ea"/><rect x="26.16" y="17.44" width="11.93" height="3.21" fill="#f4c090"/><rect x="37.79" y="17.44" width="3.21" height="3.21" fill="#1a0c0a"/><rect x="0.00" y="20.35" width="3.21" height="3.21" fill="#1a0c0a"/><rect x="2.91" y="20.35" width="9.02" height="3.21" fill="#d08450"/><rect x="11.63" y="20.35" width="3.21" height="3.21" fill="#9a5630"/><rect x="14.53" y="20.35" width="3.21" height="3.21" fill="#efe2ea"/><rect x="17.44" y="20.35" width="6.11" height="3.21" fill="#eae25c"/><rect x="23.25" y="20.35" width="3.21" height="3.21" fill="#efe2ea"/><rect x="26.16" y="20.35" width="3.21" height="3.21" fill="#9a5630"/><rect x="29.07" y="20.35" width="9.02" height="3.21" fill="#d08450"/><rect x="37.79" y="20.35" width="3.21" height="3.21" fill="#1a0c0a"/><rect x="0.00" y="23.25" width="3.21" height="3.21" fill="#1a0c0a"/><rect x="2.91" y="23.25" width="9.02" height="3.21" fill="#d08450"/><rect x="11.63" y="23.25" width="3.21" height="3.21" fill="#9a5630"/><rect x="14.53" y="23.25" width="11.93" height="3.21" fill="#efe2ea"/><rect x="26.16" y="23.25" width="3.21" height="3.21" fill="#9a5630"/><rect x="29.07" y="23.25" width="9.02" height="3.21" fill="#d08450"/><rect x="37.79" y="23.25" width="3.21" height="3.21" fill="#1a0c0a"/><rect x="0.00" y="26.16" width="3.21" height="3.21" fill="#1a0c0a"/><rect x="2.91" y="26.16" width="11.93" height="3.21" fill="#d08450"/><rect x="14.53" y="26.16" width="3.21" height="3.21" fill="#9a5630"/><rect x="17.44" y="26.16" width="6.11" height="3.21" fill="#d08450"/><rect x="23.25" y="26.16" width="3.21" height="3.21" fill="#9a5630"/><rect x="26.16" y="26.16" width="11.93" height="3.21" fill="#d08450"/><rect x="37.79" y="26.16" width="3.21" height="3.21" fill="#1a0c0a"/><rect x="0.00" y="29.07" width="3.21" height="3.21" fill="#1a0c0a"/><rect x="2.91" y="29.07" width="11.93" height="3.21" fill="#d08450"/><rect x="14.53" y="29.07" width="3.21" height="3.21" fill="#9a5630"/><rect x="17.44" y="29.07" width="6.11" height="3.21" fill="#d08450"/><rect x="23.25" y="29.07" width="3.21" height="3.21" fill="#9a5630"/><rect x="26.16" y="29.07" width="11.93" height="3.21" fill="#d08450"/><rect x="37.79" y="29.07" width="3.21" height="3.21" fill="#1a0c0a"/><rect x="0.00" y="31.97" width="3.21" height="3.21" fill="#1a0c0a"/><rect x="2.91" y="31.97" width="35.18" height="3.21" fill="#a85c38"/><rect x="37.79" y="31.97" width="3.21" height="3.21" fill="#1a0c0a"/></svg>
<svg style="left:971px;top:440px;" width="26.2" height="34.9"><rect x="8.72" y="0.00" width="9.02" height="3.21" fill="#140c04"/><rect x="5.81" y="2.91" width="3.21" height="3.21" fill="#140c04"/><rect x="8.72" y="2.91" width="3.21" height="3.21" fill="#fde9a8"/><rect x="11.63" y="2.91" width="6.11" height="3.21" fill="#f6c244"/><rect x="17.44" y="2.91" width="3.21" height="3.21" fill="#140c04"/><rect x="2.91" y="5.81" width="3.21" height="3.21" fill="#140c04"/><rect x="5.81" y="5.81" width="3.21" height="3.21" fill="#fde9a8"/><rect x="8.72" y="5.81" width="3.21" height="3.21" fill="#f6c244"/><rect x="11.63" y="5.81" width="3.21" height="3.21" fill="#eaa030"/><rect x="14.53" y="5.81" width="6.11" height="3.21" fill="#f6c244"/><rect x="20.35" y="5.81" width="3.21" height="3.21" fill="#140c04"/><rect x="2.91" y="8.72" width="3.21" height="3.21" fill="#140c04"/><rect x="5.81" y="8.72" width="3.21" height="3.21" fill="#fde9a8"/><rect x="8.72" y="8.72" width="3.21" height="3.21" fill="#f6c244"/><rect x="11.63" y="8.72" width="6.11" height="3.21" fill="#fbe46a"/><rect x="17.44" y="8.72" width="6.11" height="3.21" fill="#f6c244"/><rect x="23.25" y="8.72" width="3.21" height="3.21" fill="#140c04"/><rect x="2.91" y="11.63" width="3.21" height="3.21" fill="#140c04"/><rect x="5.81" y="11.63" width="3.21" height="3.21" fill="#fde9a8"/><rect x="8.72" y="11.63" width="3.21" height="3.21" fill="#f6c244"/><rect x="11.63" y="11.63" width="9.02" height="3.21" fill="#fbe46a"/><rect x="20.35" y="11.63" width="3.21" height="3.21" fill="#f6c244"/><rect x="23.25" y="11.63" width="3.21" height="3.21" fill="#140c04"/><rect x="2.91" y="14.53" width="3.21" height="3.21" fill="#140c04"/><rect x="5.81" y="14.53" width="6.11" height="3.21" fill="#f6c244"/><rect x="11.63" y="14.53" width="6.11" height="3.21" fill="#fbe46a"/><rect x="17.44" y="14.53" width="6.11" height="3.21" fill="#f6c244"/><rect x="23.25" y="14.53" width="3.21" height="3.21" fill="#140c04"/><rect x="0.00" y="17.44" width="3.21" height="3.21" fill="#140c04"/><rect x="2.91" y="17.44" width="3.21" height="3.21" fill="#fde9a8"/><rect x="5.81" y="17.44" width="3.21" height="3.21" fill="#f6c244"/><rect x="8.72" y="17.44" width="3.21" height="3.21" fill="#eaa030"/><rect x="11.63" y="17.44" width="6.11" height="3.21" fill="#f6c244"/><rect x="17.44" y="17.44" width="3.21" height="3.21" fill="#fbe46a"/><rect x="20.35" y="17.44" width="3.21" height="3.21" fill="#f6c244"/><rect x="23.25" y="17.44" width="3.21" height="3.21" fill="#140c04"/><rect x="0.00" y="20.35" width="3.21" height="3.21" fill="#140c04"/><rect x="2.91" y="20.35" width="3.21" height="3.21" fill="#fde9a8"/><rect x="5.81" y="20.35" width="6.11" height="3.21" fill="#f6c244"/><rect x="11.63" y="20.35" width="3.21" height="3.21" fill="#eaa030"/><rect x="14.53" y="20.35" width="3.21" height="3.21" fill="#f6c244"/><rect x="17.44" y="20.35" width="3.21" height="3.21" fill="#fbe46a"/><rect x="20.35" y="20.35" width="3.21" height="3.21" fill="#f6c244"/><rect x="23.25" y="20.35" width="3.21" height="3.21" fill="#140c04"/><rect x="2.91" y="23.25" width="3.21" height="3.21" fill="#140c04"/><rect x="5.81" y="23.25" width="9.02" height="3.21" fill="#f6c244"/><rect x="14.53" y="23.25" width="3.21" height="3.21" fill="#eaa030"/><rect x="17.44" y="23.25" width="6.11" height="3.21" fill="#f6c244"/><rect x="23.25" y="23.25" width="3.21" height="3.21" fill="#140c04"/><rect x="5.81" y="26.16" width="3.21" height="3.21" fill="#140c04"/><rect x="8.72" y="26.16" width="9.02" height="3.21" fill="#f6c244"/><rect x="17.44" y="26.16" width="3.21" height="3.21" fill="#eaa030"/><rect x="20.35" y="26.16" width="3.21" height="3.21" fill="#f6c244"/><rect x="23.25" y="26.16" width="3.21" height="3.21" fill="#140c04"/><rect x="8.72" y="29.07" width="3.21" height="3.21" fill="#140c04"/><rect x="11.63" y="29.07" width="6.11" height="3.21" fill="#fde9a8"/><rect x="17.44" y="29.07" width="3.21" height="3.21" fill="#f6c244"/><rect x="20.35" y="29.07" width="3.21" height="3.21" fill="#140c04"/><rect x="11.63" y="31.97" width="9.02" height="3.21" fill="#140c04"/></svg>
<svg style="left:1157.4px;top:627px;" width="26.2" height="34.9"><rect x="8.72" y="0.00" width="9.02" height="3.21" fill="#140c04"/><rect x="5.81" y="2.91" width="3.21" height="3.21" fill="#140c04"/><rect x="8.72" y="2.91" width="3.21" height="3.21" fill="#fde9a8"/><rect x="11.63" y="2.91" width="6.11" height="3.21" fill="#f6c244"/><rect x="17.44" y="2.91" width="3.21" height="3.21" fill="#140c04"/><rect x="2.91" y="5.81" width="3.21" height="3.21" fill="#140c04"/><rect x="5.81" y="5.81" width="3.21" height="3.21" fill="#fde9a8"/><rect x="8.72" y="5.81" width="3.21" height="3.21" fill="#f6c244"/><rect x="11.63" y="5.81" width="3.21" height="3.21" fill="#eaa030"/><rect x="14.53" y="5.81" width="6.11" height="3.21" fill="#f6c244"/><rect x="20.35" y="5.81" width="3.21" height="3.21" fill="#140c04"/><rect x="2.91" y="8.72" width="3.21" height="3.21" fill="#140c04"/><rect x="5.81" y="8.72" width="3.21" height="3.21" fill="#fde9a8"/><rect x="8.72" y="8.72" width="3.21" height="3.21" fill="#f6c244"/><rect x="11.63" y="8.72" width="6.11" height="3.21" fill="#fbe46a"/><rect x="17.44" y="8.72" width="6.11" height="3.21" fill="#f6c244"/><rect x="23.25" y="8.72" width="3.21" height="3.21" fill="#140c04"/><rect x="2.91" y="11.63" width="3.21" height="3.21" fill="#140c04"/><rect x="5.81" y="11.63" width="3.21" height="3.21" fill="#fde9a8"/><rect x="8.72" y="11.63" width="3.21" height="3.21" fill="#f6c244"/><rect x="11.63" y="11.63" width="9.02" height="3.21" fill="#fbe46a"/><rect x="20.35" y="11.63" width="3.21" height="3.21" fill="#f6c244"/><rect x="23.25" y="11.63" width="3.21" height="3.21" fill="#140c04"/><rect x="2.91" y="14.53" width="3.21" height="3.21" fill="#140c04"/><rect x="5.81" y="14.53" width="6.11" height="3.21" fill="#f6c244"/><rect x="11.63" y="14.53" width="6.11" height="3.21" fill="#fbe46a"/><rect x="17.44" y="14.53" width="6.11" height="3.21" fill="#f6c244"/><rect x="23.25" y="14.53" width="3.21" height="3.21" fill="#140c04"/><rect x="0.00" y="17.44" width="3.21" height="3.21" fill="#140c04"/><rect x="2.91" y="17.44" width="3.21" height="3.21" fill="#fde9a8"/><rect x="5.81" y="17.44" width="3.21" height="3.21" fill="#f6c244"/><rect x="8.72" y="17.44" width="3.21" height="3.21" fill="#eaa030"/><rect x="11.63" y="17.44" width="6.11" height="3.21" fill="#f6c244"/><rect x="17.44" y="17.44" width="3.21" height="3.21" fill="#fbe46a"/><rect x="20.35" y="17.44" width="3.21" height="3.21" fill="#f6c244"/><rect x="23.25" y="17.44" width="3.21" height="3.21" fill="#140c04"/><rect x="0.00" y="20.35" width="3.21" height="3.21" fill="#140c04"/><rect x="2.91" y="20.35" width="3.21" height="3.21" fill="#fde9a8"/><rect x="5.81" y="20.35" width="6.11" height="3.21" fill="#f6c244"/><rect x="11.63" y="20.35" width="3.21" height="3.21" fill="#eaa030"/><rect x="14.53" y="20.35" width="3.21" height="3.21" fill="#f6c244"/><rect x="17.44" y="20.35" width="3.21" height="3.21" fill="#fbe46a"/><rect x="20.35" y="20.35" width="3.21" height="3.21" fill="#f6c244"/><rect x="23.25" y="20.35" width="3.21" height="3.21" fill="#140c04"/><rect x="2.91" y="23.25" width="3.21" height="3.21" fill="#140c04"/><rect x="5.81" y="23.25" width="9.02" height="3.21" fill="#f6c244"/><rect x="14.53" y="23.25" width="3.21" height="3.21" fill="#eaa030"/><rect x="17.44" y="23.25" width="6.11" height="3.21" fill="#f6c244"/><rect x="23.25" y="23.25" width="3.21" height="3.21" fill="#140c04"/><rect x="5.81" y="26.16" width="3.21" height="3.21" fill="#140c04"/><rect x="8.72" y="26.16" width="9.02" height="3.21" fill="#f6c244"/><rect x="17.44" y="26.16" width="3.21" height="3.21" fill="#eaa030"/><rect x="20.35" y="26.16" width="3.21" height="3.21" fill="#f6c244"/><rect x="23.25" y="26.16" width="3.21" height="3.21" fill="#140c04"/><rect x="8.72" y="29.07" width="3.21" height="3.21" fill="#140c04"/><rect x="11.63" y="29.07" width="6.11" height="3.21" fill="#fde9a8"/><rect x="17.44" y="29.07" width="3.21" height="3.21" fill="#f6c244"/><rect x="20.35" y="29.07" width="3.21" height="3.21" fill="#140c04"/><rect x="11.63" y="31.97" width="9.02" height="3.21" fill="#140c04"/></svg>
<svg style="left:672px;top:617.6px;" width="23.3" height="17.4"><rect x="5.81" y="0.00" width="11.93" height="3.21" fill="#b3aed6"/><rect x="2.91" y="2.91" width="6.11" height="3.21" fill="#b3aed6"/><rect x="8.72" y="2.91" width="3.21" height="3.21" fill="#9684c4"/><rect x="11.63" y="2.91" width="3.21" height="3.21" fill="#d9d3f2"/><rect x="14.53" y="2.91" width="6.11" height="3.21" fill="#b3aed6"/><rect x="0.00" y="5.81" width="6.11" height="3.21" fill="#b3aed6"/><rect x="5.81" y="5.81" width="3.21" height="3.21" fill="#9684c4"/><rect x="8.72" y="5.81" width="3.21" height="3.21" fill="#d9d3f2"/><rect x="11.63" y="5.81" width="3.21" height="3.21" fill="#9684c4"/><rect x="14.53" y="5.81" width="3.21" height="3.21" fill="#d9d3f2"/><rect x="17.44" y="5.81" width="6.11" height="3.21" fill="#b3aed6"/><rect x="0.00" y="8.72" width="6.11" height="3.21" fill="#b3aed6"/><rect x="5.81" y="8.72" width="3.21" height="3.21" fill="#d9d3f2"/><rect x="8.72" y="8.72" width="3.21" height="3.21" fill="#9684c4"/><rect x="11.63" y="8.72" width="6.11" height="3.21" fill="#d9d3f2"/><rect x="17.44" y="8.72" width="6.11" height="3.21" fill="#b3aed6"/><rect x="0.00" y="11.63" width="9.02" height="3.21" fill="#b3aed6"/><rect x="8.72" y="11.63" width="6.11" height="3.21" fill="#d9d3f2"/><rect x="14.53" y="11.63" width="9.02" height="3.21" fill="#b3aed6"/><rect x="0.00" y="14.53" width="20.65" height="3.21" fill="#a6a0c8"/></svg>
<svg style="left:1319.5px;top:475px;" width="20.3" height="14.5"><rect x="2.91" y="0.00" width="11.93" height="3.21" fill="#b3aed6"/><rect x="0.00" y="2.91" width="6.11" height="3.21" fill="#b3aed6"/><rect x="5.81" y="2.91" width="6.11" height="3.21" fill="#d9d3f2"/><rect x="11.63" y="2.91" width="6.11" height="3.21" fill="#b3aed6"/><rect x="0.00" y="5.81" width="3.21" height="3.21" fill="#b3aed6"/><rect x="2.91" y="5.81" width="9.02" height="3.21" fill="#d9d3f2"/><rect x="11.63" y="5.81" width="9.02" height="3.21" fill="#b3aed6"/><rect x="0.00" y="8.72" width="20.65" height="3.21" fill="#b3aed6"/><rect x="2.91" y="11.63" width="17.74" height="3.21" fill="#a6a0c8"/></svg>
<div style="left:669px;top:606.5px;width:3px;height:3px;background:#86e0b0;"></div>
<div style="left:701px;top:633px;width:3px;height:3px;background:#5fc07a;"></div>
<svg style="left:683.7px;top:711.3px;" width="46.5" height="17.4"><rect x="11.63" y="0.00" width="23.55" height="3.21" fill="#16100e"/><rect x="8.72" y="2.91" width="3.21" height="3.21" fill="#16100e"/><rect x="11.63" y="2.91" width="23.55" height="3.21" fill="#8c89aa"/><rect x="34.88" y="2.91" width="3.21" height="3.21" fill="#16100e"/><rect x="5.81" y="5.81" width="3.21" height="3.21" fill="#16100e"/><rect x="8.72" y="5.81" width="29.37" height="3.21" fill="#8c89aa"/><rect x="37.79" y="5.81" width="3.21" height="3.21" fill="#16100e"/><rect x="2.91" y="8.72" width="3.21" height="3.21" fill="#16100e"/><rect x="5.81" y="8.72" width="35.18" height="3.21" fill="#d8d6e6"/><rect x="40.69" y="8.72" width="3.21" height="3.21" fill="#16100e"/><rect x="0.00" y="11.63" width="3.21" height="3.21" fill="#16100e"/><rect x="2.91" y="11.63" width="40.99" height="3.21" fill="#d8d6e6"/><rect x="43.60" y="11.63" width="3.21" height="3.21" fill="#16100e"/><rect x="2.91" y="14.53" width="11.93" height="3.21" fill="#16100e"/><rect x="17.44" y="14.53" width="14.83" height="3.21" fill="#16100e"/><rect x="34.88" y="14.53" width="9.02" height="3.21" fill="#16100e"/></svg>
<svg style="left:869.7px;top:711.3px;" width="46.5" height="17.4"><rect x="11.63" y="0.00" width="23.55" height="3.21" fill="#16100e"/><rect x="8.72" y="2.91" width="3.21" height="3.21" fill="#16100e"/><rect x="11.63" y="2.91" width="23.55" height="3.21" fill="#d63a28"/><rect x="34.88" y="2.91" width="3.21" height="3.21" fill="#16100e"/><rect x="5.81" y="5.81" width="3.21" height="3.21" fill="#16100e"/><rect x="8.72" y="5.81" width="29.37" height="3.21" fill="#d63a28"/><rect x="37.79" y="5.81" width="3.21" height="3.21" fill="#16100e"/><rect x="2.91" y="8.72" width="3.21" height="3.21" fill="#16100e"/><rect x="5.81" y="8.72" width="35.18" height="3.21" fill="#f2b4a6"/><rect x="40.69" y="8.72" width="3.21" height="3.21" fill="#16100e"/><rect x="0.00" y="11.63" width="3.21" height="3.21" fill="#16100e"/><rect x="2.91" y="11.63" width="40.99" height="3.21" fill="#f2b4a6"/><rect x="43.60" y="11.63" width="3.21" height="3.21" fill="#16100e"/><rect x="2.91" y="14.53" width="11.93" height="3.21" fill="#16100e"/><rect x="17.44" y="14.53" width="14.83" height="3.21" fill="#16100e"/><rect x="34.88" y="14.53" width="9.02" height="3.21" fill="#16100e"/></svg>
<svg style="left:1430.4px;top:710.7px;" width="40.7" height="26.2"><rect x="8.72" y="0.00" width="23.55" height="3.21" fill="#10200c"/><rect x="5.81" y="2.91" width="3.21" height="3.21" fill="#10200c"/><rect x="8.72" y="2.91" width="23.55" height="3.21" fill="#58c63a"/><rect x="31.97" y="2.91" width="3.21" height="3.21" fill="#10200c"/><rect x="2.91" y="5.81" width="3.21" height="3.21" fill="#10200c"/><rect x="5.81" y="5.81" width="29.37" height="3.21" fill="#58c63a"/><rect x="34.88" y="5.81" width="3.21" height="3.21" fill="#10200c"/><rect x="2.91" y="8.72" width="3.21" height="3.21" fill="#10200c"/><rect x="5.81" y="8.72" width="29.37" height="3.21" fill="#58c63a"/><rect x="34.88" y="8.72" width="3.21" height="3.21" fill="#10200c"/><rect x="0.00" y="11.63" width="3.21" height="3.21" fill="#10200c"/><rect x="2.91" y="11.63" width="35.18" height="3.21" fill="#58c63a"/><rect x="37.79" y="11.63" width="3.21" height="3.21" fill="#10200c"/><rect x="0.00" y="14.53" width="3.21" height="3.21" fill="#10200c"/><rect x="2.91" y="14.53" width="6.11" height="3.21" fill="#58c63a"/><rect x="8.72" y="14.53" width="6.11" height="3.21" fill="#8be060"/><rect x="14.53" y="14.53" width="3.21" height="3.21" fill="#58c63a"/><rect x="17.44" y="14.53" width="14.83" height="3.21" fill="#10200c"/><rect x="31.97" y="14.53" width="6.11" height="3.21" fill="#58c63a"/><rect x="37.79" y="14.53" width="3.21" height="3.21" fill="#10200c"/><rect x="0.00" y="17.44" width="3.21" height="3.21" fill="#10200c"/><rect x="2.91" y="17.44" width="35.18" height="3.21" fill="#58c63a"/><rect x="37.79" y="17.44" width="3.21" height="3.21" fill="#10200c"/><rect x="2.91" y="20.35" width="3.21" height="3.21" fill="#10200c"/><rect x="5.81" y="20.35" width="29.37" height="3.21" fill="#58c63a"/><rect x="34.88" y="20.35" width="3.21" height="3.21" fill="#10200c"/><rect x="5.81" y="23.25" width="29.37" height="3.21" fill="#10200c"/></svg>
<svg style="left:1316px;top:603px;" width="42" height="34" viewBox="0 0 42 34"><rect x="24.7" y="1.0" width="3.7" height="2.2" fill="#6ed246"/><rect x="28.4" y="2.0" width="3.6" height="7.0" fill="#6ed246"/><rect x="36.0" y="1.0" width="4.0" height="8.0" fill="#6ed246"/><rect x="6.0" y="18.0" width="4.0" height="9.0" fill="#6ed246"/><rect x="10.0" y="22.0" width="3.6" height="8.0" fill="#6ed246"/><rect x="13.6" y="27.0" width="2.0" height="5.0" fill="#6ed246"/><rect x="18.4" y="15.0" width="5.6" height="13.0" fill="#6ed246"/><rect x="0.0" y="2.0" width="4.0" height="6.0" fill="#1a8440"/><rect x="6.0" y="1.0" width="3.0" height="8.0" fill="#1a8440"/><rect x="12.0" y="3.0" width="3.0" height="5.0" fill="#1a8440"/><rect x="27.0" y="26.0" width="3.0" height="5.0" fill="#1a8440"/><rect x="32.0" y="25.0" width="3.0" height="6.0" fill="#1a8440"/></svg>
<svg style="left:1455px;top:229px;" width="42" height="34" viewBox="0 0 42 34"><rect x="24.7" y="1.0" width="3.7" height="2.2" fill="#6ed246"/><rect x="28.4" y="2.0" width="3.6" height="7.0" fill="#6ed246"/><rect x="36.0" y="1.0" width="4.0" height="8.0" fill="#6ed246"/><rect x="6.0" y="18.0" width="4.0" height="9.0" fill="#6ed246"/><rect x="10.0" y="22.0" width="3.6" height="8.0" fill="#6ed246"/><rect x="13.6" y="27.0" width="2.0" height="5.0" fill="#6ed246"/><rect x="18.4" y="15.0" width="5.6" height="13.0" fill="#6ed246"/><rect x="0.0" y="2.0" width="4.0" height="6.0" fill="#1a8440"/><rect x="6.0" y="1.0" width="3.0" height="8.0" fill="#1a8440"/><rect x="12.0" y="3.0" width="3.0" height="5.0" fill="#1a8440"/><rect x="27.0" y="26.0" width="3.0" height="5.0" fill="#1a8440"/><rect x="32.0" y="25.0" width="3.0" height="6.0" fill="#1a8440"/></svg>
<svg style="left:1459.3px;top:606px;" width="42" height="34" viewBox="0 0 42 34"><rect x="0.0" y="0.0" width="3.7" height="6.0" fill="#6ed246"/><rect x="3.7" y="4.0" width="2.2" height="4.5" fill="#6ed246"/><rect x="8.7" y="6.0" width="3.6" height="2.5" fill="#6ed246"/><rect x="29.6" y="12.1" width="9.0" height="3.0" fill="#7fe8ea"/><rect x="32.6" y="9.1" width="3.0" height="9.0" fill="#7fe8ea"/><rect x="22.0" y="-6.0" width="3.0" height="8.0" fill="#177d3a"/><rect x="27.0" y="-4.0" width="3.0" height="7.0" fill="#177d3a"/><rect x="32.0" y="-7.0" width="3.0" height="6.0" fill="#177d3a"/><rect x="-6.0" y="18.0" width="4.0" height="8.0" fill="#177d3a"/><rect x="0.0" y="22.0" width="4.0" height="8.0" fill="#177d3a"/><rect x="8.0" y="20.0" width="4.0" height="8.0" fill="#177d3a"/><rect x="14.0" y="24.0" width="3.0" height="6.0" fill="#177d3a"/><rect x="24.0" y="22.0" width="3.0" height="8.0" fill="#177d3a"/><rect x="30.0" y="24.0" width="3.0" height="5.0" fill="#177d3a"/></svg>
<svg style="left:1087px;top:327px;" width="42" height="34" viewBox="0 0 42 34"><rect x="0.0" y="0.0" width="3.7" height="6.0" fill="#6ed246"/><rect x="3.7" y="4.0" width="2.2" height="4.5" fill="#6ed246"/><rect x="8.7" y="6.0" width="3.6" height="2.5" fill="#6ed246"/><rect x="29.6" y="12.1" width="9.0" height="3.0" fill="#7fe8ea"/><rect x="32.6" y="9.1" width="3.0" height="9.0" fill="#7fe8ea"/><rect x="22.0" y="-6.0" width="3.0" height="8.0" fill="#177d3a"/><rect x="27.0" y="-4.0" width="3.0" height="7.0" fill="#177d3a"/><rect x="32.0" y="-7.0" width="3.0" height="6.0" fill="#177d3a"/><rect x="-6.0" y="18.0" width="4.0" height="8.0" fill="#177d3a"/><rect x="0.0" y="22.0" width="4.0" height="8.0" fill="#177d3a"/><rect x="8.0" y="20.0" width="4.0" height="8.0" fill="#177d3a"/><rect x="14.0" y="24.0" width="3.0" height="6.0" fill="#177d3a"/><rect x="24.0" y="22.0" width="3.0" height="8.0" fill="#177d3a"/><rect x="30.0" y="24.0" width="3.0" height="5.0" fill="#177d3a"/></svg>
<svg style="left:849.6px;top:603px;" width="46" height="44" viewBox="0 0 46 44"><rect x="23.0" y="3.0" width="3.4" height="4.0" fill="#6ed246"/><rect x="26.4" y="5.0" width="5.0" height="6.0" fill="#6ed246"/><rect x="34.4" y="6.5" width="3.0" height="4.5" fill="#6ed246"/><rect x="40.4" y="6.5" width="2.0" height="2.5" fill="#6ed246"/><rect x="23.0" y="38.0" width="2.0" height="3.0" fill="#6ed246"/><rect x="28.0" y="36.0" width="3.7" height="5.0" fill="#6ed246"/><path d="M0 18.7 L6 18.7 L16.5 33.6 L11 33.6 Z M19 18.7 L23 18.7 L24 31 L20 31 Z M33 18.7 L26 31 L30 31 L37 21 Z" fill="#177d3a"/></svg>
<svg style="left:1128px;top:510px;" width="46" height="40" viewBox="0 0 46 40"><rect x="2.4" y="27.0" width="3.0" height="8.0" fill="#6ed246"/><rect x="8.0" y="27.0" width="3.0" height="9.5" fill="#6ed246"/><rect x="14.0" y="33.0" width="3.0" height="3.0" fill="#6ed246"/><rect x="6.0" y="-22.0" width="4.0" height="3.0" fill="#177d3a"/><rect x="20.0" y="4.0" width="3.0" height="4.0" fill="#177d3a"/><rect x="24.0" y="6.0" width="3.0" height="4.0" fill="#177d3a"/><rect x="30.0" y="4.0" width="3.0" height="6.0" fill="#177d3a"/><rect x="36.0" y="5.0" width="3.0" height="3.0" fill="#177d3a"/></svg>
<div style="left:638px;top:202.5px;width:927.5px;height:521px;border:3px solid #ffffff;"></div>
<div style="left:1412px;top:123px;width:378px;height:48px;background:rgba(4,10,6,0.66);border-radius:3px;"></div>
<svg style="left:1417px;top:139px;" width="8" height="14" viewBox="0 0 8 14"><path d="M0 1 H7 M0 5 H7 M0 9 H7 M0 13 H7" stroke="#3f6a4a" stroke-width="1.2"/></svg>
<div style="left:1431.5px;top:130px;width:32px;height:32px;background:#2c2c2c;border:1px solid #4d5a50;border-radius:3px;"></div>
<svg style="left:1431.5px;top:130px;" width="32" height="32" viewBox="0 0 32 32"><g fill="none" stroke="#ffffff" stroke-width="2.4" stroke-linecap="round"><rect x="6" y="6.5" width="20" height="19" rx="3"/><path d="M16 7 V25 M6.5 16 H25.5"/></g></svg>
<div style="left:1463.5px;top:130px;width:13px;height:32px;background:#2c2c2c;border:1px solid #4d5a50;border-radius:3px;"></div>
<svg style="left:1463.5px;top:130px;" width="13" height="32" viewBox="0 0 13 32"><g fill="none" stroke="#ffffff" stroke-width="2.4" stroke-linecap="round"><path d="M2.5 13.5 H10.5 L6.5 17 Z" fill="#fff" stroke-width="1"/></g></svg>
<div style="left:1483px;top:137px;width:1px;height:20px;background:#3a5a44;"></div>
<div style="left:1489.5px;top:130px;width:32px;height:32px;background:#2c2c2c;border:1px solid #4d5a50;border-radius:3px;"></div>
<svg style="left:1489.5px;top:130px;" width="32" height="32" viewBox="0 0 32 32"><g fill="none" stroke="#ffffff" stroke-width="2.4" stroke-linecap="round"><circle cx="13" cy="13" r="7"/><path d="M18.5 18.5 L26 26" stroke-width="3.4"/><path d="M10 13 H16"/></g></svg>
<div style="left:1533.5px;top:130px;width:32px;height:32px;background:#2c2c2c;border:1px solid #4d5a50;border-radius:3px;"></div>
<svg style="left:1533.5px;top:130px;" width="32" height="32" viewBox="0 0 32 32"><g fill="none" stroke="#ffffff" stroke-width="2.4" stroke-linecap="round"><circle cx="13" cy="13" r="7"/><path d="M18.5 18.5 L26 26" stroke-width="3.4"/><path d="M10 11.5 H16 M10 14.5 H16" stroke-width="2"/></g></svg>
<div style="left:1577.5px;top:130px;width:32px;height:32px;background:#2c2c2c;border:1px solid #4d5a50;border-radius:3px;"></div>
<svg style="left:1577.5px;top:130px;" width="32" height="32" viewBox="0 0 32 32"><g fill="none" stroke="#ffffff" stroke-width="2.4" stroke-linecap="round"><circle cx="13" cy="13" r="7"/><path d="M18.5 18.5 L26 26" stroke-width="3.4"/><path d="M10 13 H16 M13 10 V16"/></g></svg>
<div style="left:1621.5px;top:130px;width:32px;height:32px;background:#2c2c2c;border:1px solid #4d5a50;border-radius:3px;"></div>
<svg style="left:1621.5px;top:130px;" width="32" height="32" viewBox="0 0 32 32"><g fill="none" stroke="#ffffff" stroke-width="2.4" stroke-linecap="round"><path d="M6 12 V6 H12 M20 6 H26 V12 M26 20 V26 H20 M12 26 H6 V20" stroke-linecap="butt"/></g></svg>
<div style="left:1665.5px;top:130px;width:32px;height:32px;background:#8d919c;border:1px solid #b8bcc6;border-radius:3px;"></div>
<svg style="left:1665.5px;top:130px;" width="32" height="32" viewBox="0 0 32 32"><g fill="none" stroke="#ffffff" stroke-width="2.4" stroke-linecap="round"><rect x="5" y="5" width="22" height="22" rx="2" stroke-width="2.6"/><rect x="11" y="11" width="10" height="10" fill="#6d717c" stroke="#fff" stroke-width="2"/></g></svg>
<div style="left:1709.5px;top:130px;width:32px;height:32px;background:#2c2c2c;border:1px solid #4d5a50;border-radius:3px;"></div>
<svg style="left:1709.5px;top:130px;" width="32" height="32" viewBox="0 0 32 32"><g fill="none" stroke="#ffffff" stroke-width="2.4" stroke-linecap="round"><path d="M11 7 L24 16 L11 25 Z" stroke-linejoin="round"/></g></svg>
<div style="left:1753.5px;top:130px;width:32px;height:32px;background:#2c2c2c;border:1px solid #4d5a50;border-radius:3px;"></div>
<svg style="left:1753.5px;top:130px;" width="32" height="32" viewBox="0 0 32 32"><g fill="none" stroke="#ffffff" stroke-width="2.4" stroke-linecap="round"><path d="M6 19 L16 24 L26 19 M6 23 L16 28 L26 23" stroke="#8a8a8a" stroke-width="1.8"/><path d="M6 14 L16 9 L26 14 L16 19 Z" fill="#fff" stroke-width="1"/><path d="M8 4 L13 4 L11.5 6 L17 11 L15 13 L9.5 8 L8 9.5 Z" fill="#fff" stroke="#2c2c2c" stroke-width="1"/></g></svg>
<div style="left:47px;top:47.5px;width:770px;height:544px;background:rgba(0,0,0,0.25);border-radius:10px;"></div>
<div style="left:49px;top:49px;width:764.5px;height:30.5px;border-radius:9px 7px 0 0;background:linear-gradient(90deg,#202625 0%,#1f2927 8%,#1c382f 20%,#19483b 30%,#176050 42%,#14785f 56%,#118c6e 70%,#0e9c7a 85%,#0ca882 100%);"></div>
<svg style="left:49px;top:49px;" width="766" height="32" viewBox="0 0 766 32"><path d="M688 30.5 L709 5 L758 5 Q764.5 5 764.5 11 L764.5 30.5 Z" fill="#2a2a2a"/><path d="M0 0.8 H758" stroke="rgba(255,255,255,0.10)" stroke-width="1"/></svg>
<svg style="left:62px;top:62px;" width="10" height="10" viewBox="0 0 10 10"><path d="M0 9 L8.5 9 L8.5 0.5 Z" fill="#8f9794"/></svg>
<span id="t79" class="t" style="left:81px;top:55.1px;font-size:17px;color:#e8e8e8;letter-spacing:-0.02px;">Colour</span>
<svg style="left:791px;top:59.5px;" width="14" height="14" viewBox="0 0 14 14"><path d="M1.5 1.5 L12.5 12.5 M12.5 1.5 L1.5 12.5" stroke="#cdcdcd" stroke-width="1.8" fill="none"/></svg>
<div style="left:49px;top:79.5px;width:766.5px;height:510px;background:#272727;border:1.5px solid #468b70;border-radius:7px;box-shadow:inset 0 0 0 1.2px rgba(24,70,54,0.6);"></div>
<span id="t80" class="t" style="left:75px;top:90.1px;font-size:17px;color:#e6e6e6;letter-spacing:-0.28px;">Select Colour:</span>
<div style="left:75px;top:121px;width:256px;height:309px;background:linear-gradient(180deg,rgba(140,140,140,0) 0%,rgba(140,140,140,1) 100%),linear-gradient(90deg,#8c0000 0%,#8c8c00 16.67%,#008c00 33.33%,#008c8c 50%,#00008c 66.67%,#8c008c 83.33%,#8c0000 100%);"></div>
<svg style="left:165px;top:176px;" width="12" height="12" viewBox="0 0 12 12"><rect x="0.5" y="0.5" width="11" height="11" fill="#0c0c0c"/><path d="M1.6 4.6 V1.6 H4.6 M7.4 1.6 H10.4 V4.6 M10.4 7.4 V10.4 H7.4 M4.6 10.4 H1.6 V7.4" stroke="#fff" stroke-width="1.5" fill="none"/><rect x="4" y="4" width="4" height="4" fill="#2a8a3a"/></svg>
<div style="left:347px;top:122px;width:20px;height:308px;background:linear-gradient(180deg,#1df04c 0%,#1ec648 22%,#1a8c35 45%,#106022 66%,#062c0e 86%,#010501 100%);"></div>
<div style="left:343.5px;top:258.5px;width:26.5px;height:3px;background:#8a8a8a;"></div>
<svg style="left:369px;top:253px;" width="12" height="14" viewBox="0 0 12 14"><path d="M11 1 L11 13 L1 7 Z" fill="#8e8e8e"/></svg>
<svg style="left:391px;top:125px;" width="24" height="24" viewBox="0 0 24 24"><circle cx="12" cy="12" r="10.3" fill="#4c4c4c" stroke="#1d1d1d" stroke-width="2.2"/></svg>
<span id="t81" class="t" style="left:423px;top:128.4px;font-size:17px;color:#e6e6e6;letter-spacing:-1.07px;">Red</span>
<svg style="left:391px;top:163px;" width="24" height="24" viewBox="0 0 24 24"><circle cx="12" cy="12" r="10.3" fill="#4c4c4c" stroke="#1d1d1d" stroke-width="2.2"/></svg>
<span id="t82" class="t" style="left:423px;top:166.9px;font-size:17px;color:#e6e6e6;letter-spacing:-0.28px;">Green</span>
<svg style="left:391px;top:202px;" width="24" height="24" viewBox="0 0 24 24"><circle cx="12" cy="12" r="10.3" fill="#4c4c4c" stroke="#1d1d1d" stroke-width="2.2"/></svg>
<span id="t83" class="t" style="left:423px;top:205.4px;font-size:17px;color:#e6e6e6;letter-spacing:-0.01px;">Blue</span>
<span id="t84" class="t" style="left:424px;top:263.6px;font-size:17px;color:#e6e6e6;letter-spacing:0.00px;">Alpha</span>
<div style="left:513px;top:133px;width:179.5px;height:7.5px;background:linear-gradient(90deg,#1f8d36,#5e9a3c 25%,#a39a42 50%,#e08f45 78%,#ff8b40);"></div>
<div style="left:513px;top:171.5px;width:179.5px;height:7.5px;background:linear-gradient(90deg,#1a0338,#16403a 25%,#1c8038 50%,#22c03c 75%,#2cf040);"></div>
<div style="left:513px;top:209.5px;width:179.5px;height:7.5px;background:linear-gradient(90deg,#2c9414,#249050 25%,#1e8c8c 50%,#1c86c8 75%,#1e80f8);"></div>
<div style="left:513px;top:271.5px;width:179.5px;height:7.5px;background:#b8b8b8;background-image:linear-gradient(90deg,rgba(26,140,53,0),rgba(26,140,53,1)),repeating-linear-gradient(90deg,#bcbcbc 0 9px,#8e8e8e 9px 18px);"></div>
<svg style="left:528.5px;top:124.0px;" width="16" height="11" viewBox="0 0 16 11"><path d="M0.5 0.5 H15.5 L8 10.5 Z" fill="#f4f4f4" stroke="#2a2a2a" stroke-width="1"/></svg>
<svg style="left:602px;top:162.5px;" width="16" height="11" viewBox="0 0 16 11"><path d="M0.5 0.5 H15.5 L8 10.5 Z" fill="#f4f4f4" stroke="#2a2a2a" stroke-width="1"/></svg>
<svg style="left:546px;top:200.5px;" width="16" height="11" viewBox="0 0 16 11"><path d="M0.5 0.5 H15.5 L8 10.5 Z" fill="#f4f4f4" stroke="#2a2a2a" stroke-width="1"/></svg>
<svg style="left:676.5px;top:262.5px;" width="16" height="11" viewBox="0 0 16 11"><path d="M0.5 0.5 H15.5 L8 10.5 Z" fill="#f4f4f4" stroke="#2a2a2a" stroke-width="1"/></svg>
<div style="left:718.5px;top:124.5px;width:49px;height:27px;background:#232323;border:1px solid #303030;border-radius:2px;"></div>
<span id="t85" class="t" style="left:723px;top:128.6px;font-size:17px;color:#ececec;letter-spacing:-0.28px;">26</span>
<div style="left:718.5px;top:163px;width:49px;height:27px;background:#232323;border:1px solid #303030;border-radius:2px;"></div>
<span id="t86" class="t" style="left:723px;top:167.1px;font-size:17px;color:#ececec;letter-spacing:0.05px;">140</span>
<div style="left:718.5px;top:200.7px;width:49px;height:27px;background:#232323;border:1px solid #303030;border-radius:2px;"></div>
<span id="t87" class="t" style="left:723px;top:204.8px;font-size:17px;color:#ececec;letter-spacing:-0.28px;">53</span>
<div style="left:718.5px;top:262px;width:49px;height:27px;background:#232323;border:1px solid #303030;border-radius:2px;"></div>
<span id="t88" class="t" style="left:723px;top:266.1px;font-size:17px;color:#ececec;letter-spacing:0.05px;">255</span>
<svg style="left:391px;top:326px;" width="24" height="24" viewBox="0 0 24 24"><circle cx="12" cy="12" r="10.3" fill="#4c4c4c" stroke="#1d1d1d" stroke-width="2.2"/></svg>
<span id="t89" class="t" style="left:423px;top:329.8px;font-size:17px;color:#e6e6e6;letter-spacing:-0.07px;">Hue</span>
<svg style="left:391px;top:364px;" width="24" height="24" viewBox="0 0 24 24"><circle cx="12" cy="12" r="10.3" fill="#4c4c4c" stroke="#1d1d1d" stroke-width="2.2"/></svg>
<span id="t90" class="t" style="left:423px;top:368.0px;font-size:17px;color:#e6e6e6;letter-spacing:-1.01px;">Sat</span>
<svg style="left:391px;top:402px;" width="24" height="24" viewBox="0 0 24 24"><circle cx="12" cy="12" r="10.3" fill="#4c4c4c" stroke="#1d1d1d" stroke-width="2.2"/><circle cx="12" cy="12" r="6.6" fill="#19ab7b"/></svg>
<span id="t91" class="t" style="left:423px;top:406.1px;font-size:17px;color:#e6e6e6;letter-spacing:-0.33px;">Val</span>
<div style="left:513px;top:327.5px;width:179.5px;height:19.5px;background:linear-gradient(90deg,#6ea018,#4c981c 25%,#1a8c35 50%,#1e8c6c 75%,#2a80a4);"></div>
<div style="left:513px;top:365px;width:179.5px;height:20px;background:linear-gradient(90deg,#8c8c8c 0.00% 9.09%,#828c84 9.09% 18.18%,#788c7c 18.18% 27.27%,#6e8c74 27.27% 36.36%,#648c6c 36.36% 45.45%,#5a8c64 45.45% 54.55%,#508c5c 54.55% 63.64%,#468c54 63.64% 72.73%,#3c8c4c 72.73% 81.82%,#2a8c3e 81.82% 90.91%,#108c2a 90.91% 100.00%);"></div>
<div style="left:513px;top:404px;width:179.5px;height:20px;background:linear-gradient(90deg,#000000 0.00% 9.09%,#051a0a 9.09% 18.18%,#0a3313 18.18% 27.27%,#0f4d1d 27.27% 36.36%,#145f25 36.36% 45.45%,#1a7f31 45.45% 54.55%,#1f993a 54.55% 63.64%,#24b344 63.64% 72.73%,#29cc4e 72.73% 81.82%,#2ee657 81.82% 90.91%,#33ff61 90.91% 100.00%);"></div>
<div style="left:591.8px;top:325.7px;width:20.5px;height:23.5px;background:#1d8c38;border:2px solid #f4f4f4;border-radius:1px;"></div>
<div style="left:638.8px;top:364px;width:20.5px;height:23.5px;background:#1d8c38;border:2px solid #f4f4f4;border-radius:1px;"></div>
<div style="left:591.8px;top:402.5px;width:20.5px;height:23.5px;background:#1d8c38;border:2px solid #f4f4f4;border-radius:1px;"></div>
<div style="left:718.5px;top:324.7px;width:49px;height:27px;background:#232323;border:1px solid #303030;border-radius:2px;"></div>
<span id="t92" class="t" style="left:723px;top:328.8px;font-size:17px;color:#ececec;letter-spacing:0.05px;">134</span>
<div style="left:718.5px;top:363.5px;width:49px;height:27px;background:#232323;border:1px solid #303030;border-radius:2px;"></div>
<span id="t93" class="t" style="left:723px;top:367.6px;font-size:17px;color:#ececec;letter-spacing:-0.28px;">81</span>
<div style="left:718.5px;top:401.5px;width:49px;height:27px;background:#232323;border:1px solid #303030;border-radius:2px;"></div>
<span id="t94" class="t" style="left:723px;top:405.6px;font-size:17px;color:#ececec;letter-spacing:-0.28px;">55</span>
<span id="t95" class="t" style="left:75px;top:439.1px;font-size:17px;color:#e6e6e6;letter-spacing:-0.27px;">Basic Colours:</span>
<div style="left:75.8px;top:464.4px;width:21px;height:20.2px;background:#ff0000;border:1px solid rgba(20,20,20,0.55);"></div>
<div style="left:75.8px;top:488px;width:21px;height:19.8px;background:#ffffff;border:1px solid rgba(20,20,20,0.55);"></div>
<div style="left:75.8px;top:546.3px;width:21px;height:21px;background:#000000;border:1.5px dotted #f0f0f0;"></div>
<div style="left:101.87px;top:464.4px;width:21px;height:20.2px;background:#ffff00;border:1px solid rgba(20,20,20,0.55);"></div>
<div style="left:101.87px;top:488px;width:21px;height:19.8px;background:#e6e6e6;border:1px solid rgba(20,20,20,0.55);"></div>
<div style="left:101.87px;top:546.3px;width:21px;height:21px;background:#000000;border:1px solid #3a3a3a;"></div>
<div style="left:127.94px;top:464.4px;width:21px;height:20.2px;background:#00ff00;border:1px solid rgba(20,20,20,0.55);"></div>
<div style="left:127.94px;top:488px;width:21px;height:19.8px;background:#cccccc;border:1px solid rgba(20,20,20,0.55);"></div>
<div style="left:127.94px;top:546.3px;width:21px;height:21px;background:#000000;border:1px solid #3a3a3a;"></div>
<div style="left:154.01px;top:464.4px;width:21px;height:20.2px;background:#00ffff;border:1px solid rgba(20,20,20,0.55);"></div>
<div style="left:154.01px;top:488px;width:21px;height:19.8px;background:#b3b3b3;border:1px solid rgba(20,20,20,0.55);"></div>
<div style="left:154.01px;top:546.3px;width:21px;height:21px;background:#000000;border:1px solid #3a3a3a;"></div>
<div style="left:180.07999999999998px;top:464.4px;width:21px;height:20.2px;background:#0000ff;border:1px solid rgba(20,20,20,0.55);"></div>
<div style="left:180.07999999999998px;top:488px;width:21px;height:19.8px;background:#999999;border:1px solid rgba(20,20,20,0.55);"></div>
<div style="left:180.07999999999998px;top:546.3px;width:21px;height:21px;background:#000000;border:1px solid #3a3a3a;"></div>
<div style="left:206.14999999999998px;top:464.4px;width:21px;height:20.2px;background:#ff00ff;border:1px solid rgba(20,20,20,0.55);"></div>
<div style="left:206.14999999999998px;top:488px;width:21px;height:19.8px;background:#808080;border:1px solid rgba(20,20,20,0.55);"></div>
<div style="left:206.14999999999998px;top:546.3px;width:21px;height:21px;background:#000000;border:1px solid #3a3a3a;"></div>
<div style="left:232.22000000000003px;top:464.4px;width:21px;height:20.2px;background:#ffffff;border:1px solid rgba(20,20,20,0.55);"></div>
<div style="left:232.22000000000003px;top:488px;width:21px;height:19.8px;background:#666666;border:1px solid rgba(20,20,20,0.55);"></div>
<div style="left:232.22000000000003px;top:546.3px;width:21px;height:21px;background:#000000;border:1px solid #3a3a3a;"></div>
<div style="left:258.29px;top:464.4px;width:21px;height:20.2px;background:#000000;border:1px solid rgba(20,20,20,0.55);"></div>
<div style="left:258.29px;top:488px;width:21px;height:19.8px;background:#4d4d4d;border:1px solid rgba(20,20,20,0.55);"></div>
<div style="left:258.29px;top:546.3px;width:21px;height:21px;background:#000000;border:1px solid #3a3a3a;"></div>
<div style="left:284.36px;top:464.4px;width:21px;height:20.2px;background:#804000;border:1px solid rgba(20,20,20,0.55);"></div>
<div style="left:284.36px;top:488px;width:21px;height:19.8px;background:#333333;border:1px solid rgba(20,20,20,0.55);"></div>
<div style="left:284.36px;top:546.3px;width:21px;height:21px;background:#000000;border:1px solid #3a3a3a;"></div>
<div style="left:310.43px;top:464.4px;width:21px;height:20.2px;background:#800080;border:1px solid rgba(20,20,20,0.55);"></div>
<div style="left:310.43px;top:488px;width:21px;height:19.8px;background:#25212a;border:1px solid rgba(20,20,20,0.55);"></div>
<div style="left:310.43px;top:546.3px;width:21px;height:21px;background:#000000;border:1px solid #3a3a3a;"></div>
<span id="t96" class="t" style="left:75px;top:518.6px;font-size:17px;color:#e6e6e6;letter-spacing:-0.11px;">Custom Colours:</span>
<div style="left:344.5px;top:462.4px;width:35.5px;height:47.4px;background:#1f8c3b;"></div>
<div style="left:379.5px;top:462px;width:36.5px;height:50.5px;background:#1f953f;border:1.5px solid #e8e8e8;border-left:none;"></div>
<span id="t97" class="t" style="left:429px;top:467.4px;font-size:17px;color:#e6e6e6;letter-spacing:-0.61px;">Hex</span>
<div style="left:464px;top:463px;width:88.5px;height:27px;background:#232323;border:1px solid #303030;border-radius:2px;"></div>
<span id="t98" class="t" style="left:470px;top:467.4px;font-size:17px;color:#ececec;letter-spacing:-0.53px;">1A8C35</span>
<span id="t99" class="t" style="left:429px;top:497.1px;font-size:17px;color:#e6e6e6;letter-spacing:-0.03px;">New Colour</span>
<div style="left:345.3px;top:539.3px;width:153px;height:30px;background:#222222;border:1px solid #3c3c3c;border-radius:3px;"></div>
<span id="t100" class="t" style="left:374.5px;top:545.1px;font-size:17px;color:#ececec;letter-spacing:-0.08px;">Store Colour</span>
<div style="left:528.5px;top:539.3px;width:122px;height:30px;background:#222222;border:1px solid #3c3c3c;border-radius:3px;"></div>
<span id="t101" class="t" style="left:564.5px;top:545.1px;font-size:17px;color:#ececec;letter-spacing:-0.71px;">Cancel</span>
<div style="left:659.3px;top:539.3px;width:122.3px;height:30px;background:#222222;border:1px solid #3c3c3c;border-radius:3px;"></div>
<span id="t102" class="t" style="left:708.5px;top:545.1px;font-size:17px;color:#ececec;letter-spacing:-1.04px;">OK</span>
<svg style="left:377px;top:264px;" width="14" height="22" viewBox="0 0 14 22"><path d="M1.5 1.5 V17.5 L5.3 14 L8.3 20.5 L10.8 19.4 L7.9 13 L13 13 Z" fill="#ffffff" stroke="#111" stroke-width="1.3" stroke-linejoin="round"/></svg>
</div></body></html>
